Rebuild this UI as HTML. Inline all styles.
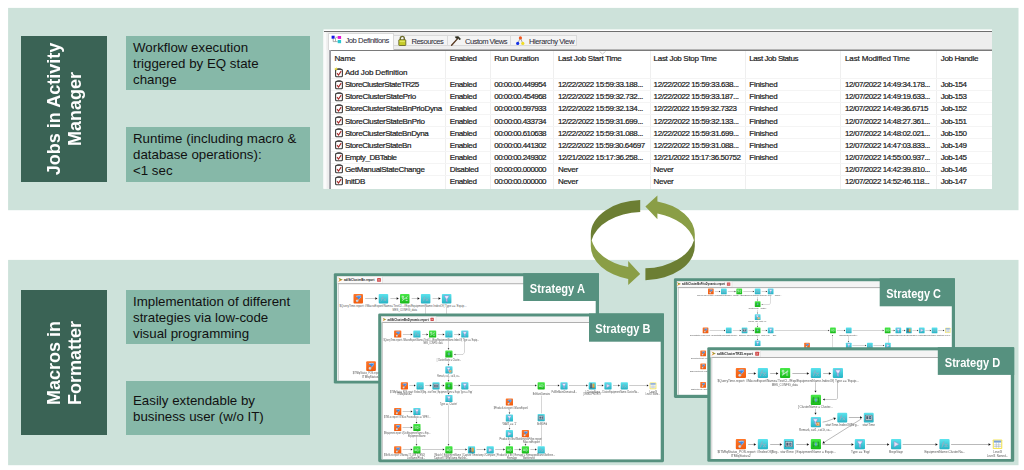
<!DOCTYPE html>
<html><head><meta charset="utf-8">
<style>
*{box-sizing:border-box;margin:0;padding:0}
html,body{width:1024px;height:470px;background:#fff;overflow:hidden;font-family:"Liberation Sans",sans-serif;}
.abs{position:absolute}
.panel{position:absolute;left:8px;width:1010.5px;background:#cde2da}
.dark{position:absolute;left:21px;width:86px;background:#3a6355}
.dark span{position:absolute;left:calc(50% + 0.7px);top:50%;transform:translate(-50%,-50%) rotate(-90deg);color:#fff;font-weight:bold;font-size:18px;line-height:21.4px;text-align:center;white-space:nowrap}
.mid{position:absolute;left:126px;width:184px;background:#86b8a8;color:#111;font-size:13.3px;line-height:16px;padding-left:7px;display:flex;align-items:center}
.t{position:absolute;white-space:nowrap;font-size:8px;line-height:10px;color:#1a1a1a;letter-spacing:-0.33px;-webkit-text-stroke:0.2px #1a1a1a}
.n{letter-spacing:-0.57px}
.d{letter-spacing:-0.41px}
.hl{position:absolute;height:1px;background:#f4f4f4;left:331px;width:661px}
.vl{position:absolute;width:1px;background:#efefef;top:51px;height:138px}
</style></head><body>
<div class="abs" style="left:0;top:0;width:1024px;height:470px;filter:blur(0.3px)">
<svg class="abs" style="left:0;top:0" width="1024" height="470"><rect x="8.1" y="7.9" width="1010.4" height="202.3" fill="#cde2da"/><rect x="8.1" y="259.9" width="1010.4" height="205.3" fill="#cde2da"/></svg>

<div class="dark" style="top:36px;height:146px"><span>Jobs in Activity<br>Manager</span></div>
<div class="dark" style="top:290px;height:145px"><span>Macros in<br>Formatter</span></div>

<div class="mid" style="top:36px;height:54px;padding-top:2.6px"><div>Workflow execution<br>triggered by EQ state<br>change</div></div>
<div class="mid" style="top:127px;height:55px;padding-top:1px"><div>Runtime (including macro &amp;<br>database operations):<br>&lt;1 sec</div></div>
<div class="mid" style="top:290px;height:54px;padding-top:1.4px"><div>Implementation of different<br>strategies via low-code<br>visual programming</div></div>
<div class="mid" style="top:381px;height:54px;padding-top:2px"><div>Easily extendable by<br>business user (w/o IT)</div></div>

<!-- table window -->
<svg class="abs" style="left:0;top:0" width="1024" height="200"><rect x="323.5" y="29.4" width="668.5" height="159.3" fill="#fff"/></svg>
<div class="abs" style="left:324px;top:31px;width:668px;height:1px;background:#6e6e6e"></div>
<div class="abs" style="left:324px;top:32px;width:668px;height:18px;background:#eeeeee"></div>
<svg class="abs" style="left:0;top:0" width="1024" height="200"><rect x="323.5" y="32" width="3" height="156.7" fill="#fbfbfb"/><rect x="326.5" y="32" width="2.5" height="156.7" fill="#eeeeee"/></svg>
<div class="abs" style="left:329px;top:49px;width:663px;height:1px;background:#b4b4b4"></div>
<div class="abs" style="left:330px;top:50px;width:662px;height:1px;background:#7a7a7a"></div>
<div class="abs" style="left:329px;top:49px;width:1px;height:140px;background:#a8a8ae"></div>
<div class="abs" style="left:330px;top:50px;width:1px;height:139px;background:#9a9aa0"></div>
<div class="abs" style="left:331px;top:51px;width:661px;height:138px;background:#fff"></div>
<div class="abs" style="left:328px;top:33px;width:66px;height:17px;background:#fff;border:1px solid #d9d9d9;border-bottom:none"></div>
<div class="abs" style="left:394px;top:34.7px;width:53.5px;height:11.6px;background:#f4f4f4;border:1px solid #dadada;border-left:none"></div>
<div class="abs" style="left:447.5px;top:34.7px;width:63.5px;height:11.6px;background:#f4f4f4;border:1px solid #dadada;border-left:none"></div>
<div class="abs" style="left:511px;top:34.7px;width:66px;height:11.6px;background:#f4f4f4;border:1px solid #dadada;border-left:none"></div>
<div class="t" style="left:345.4px;top:35.5px;letter-spacing:-0.417px;font-size:7.6px;color:#2e2e3a;-webkit-text-stroke:0.05px #2e2e3a">Job Definitions</div>
<div class="t" style="left:411.4px;top:36.5px;letter-spacing:-0.492px;font-size:7.6px;color:#2e2e3a;-webkit-text-stroke:0.05px #2e2e3a">Resources</div>
<div class="t" style="left:465.0px;top:36.5px;letter-spacing:-0.536px;font-size:7.6px;color:#2e2e3a;-webkit-text-stroke:0.05px #2e2e3a">Custom Views</div>
<div class="t" style="left:529.0px;top:36.5px;letter-spacing:-0.426px;font-size:7.6px;color:#2e2e3a;-webkit-text-stroke:0.05px #2e2e3a">Hierarchy View</div>
<svg class="abs" style="left:330px;top:34px" width="14" height="12" viewBox="0 0 14 12"><path d="M3.2 4.7 V7.6 H7.7 M5.5 3.3 H7.7 M5.5 4 V7.6" fill="none" stroke="#9a9a9a" stroke-width="0.8"/><rect x="1.6" y="1.7" width="3" height="3" fill="#1414e6"/><rect x="7.7" y="2" width="3.4" height="2.9" fill="#e614d2"/><rect x="7.7" y="6" width="3.4" height="3.2" fill="#28c8d2"/></svg>
<svg class="abs" style="left:398px;top:35px" width="9" height="12" viewBox="0 0 9 12"><path d="M2.3 5 V3.4 A2 2 0 0 1 6.3 3.4 V5" fill="none" stroke="#6e6e30" stroke-width="1.4"/><rect x="0.8" y="4.7" width="7" height="5.8" rx="0.6" fill="#c6cc2c" stroke="#5c5c1e" stroke-width="0.8"/><rect x="1.7" y="5.7" width="5.2" height="1.3" fill="#e2e660"/></svg>
<svg class="abs" style="left:450px;top:35px" width="12" height="12" viewBox="0 0 12 12"><path d="M1.6 10.3 L7.6 3.6" stroke="#5a3a22" stroke-width="1.4" stroke-linecap="round"/><path d="M5.2 1.8 L8.3 1.5 L10.6 3.9 L9.6 4.9 L8.2 3.3 L6 3.3 Z" fill="#2e2e20" stroke="#2e2e20" stroke-width="0.5"/></svg>
<svg class="abs" style="left:515px;top:35px" width="11" height="12" viewBox="0 0 11 12"><path d="M5.4 3 L2.7 8.4 M5.4 3 L7.8 8.4" stroke="#8a8a8a" stroke-width="0.7"/><circle cx="5.4" cy="2.9" r="1.6" fill="#f0561e"/><circle cx="2.7" cy="8.4" r="1.6" fill="#1432e6"/><circle cx="7.8" cy="8.4" r="1.6" fill="#f0dc28"/></svg>
<svg class="abs" style="left:599px;top:51px" width="7" height="4" viewBox="0 0 7 4"><path d="M0.5 0.5 L3.5 3 L6.5 0.5" fill="none" stroke="#bdbdbd" stroke-width="0.8"/></svg>
<div class="t" style="left:334.5px;top:54.1px;letter-spacing:-0.160px">Name</div>
<div class="t" style="left:449.7px;top:54.1px;letter-spacing:-0.366px">Enabled</div>
<div class="t" style="left:494.3px;top:54.1px;letter-spacing:-0.228px">Run Duration</div>
<div class="t" style="left:557.9px;top:54.1px;letter-spacing:-0.280px">Last Job Start Time</div>
<div class="t" style="left:653.6px;top:54.1px;letter-spacing:-0.299px">Last Job Stop Time</div>
<div class="t" style="left:749.3px;top:54.1px;letter-spacing:-0.430px">Last Job Status</div>
<div class="t" style="left:845.0px;top:54.1px;letter-spacing:-0.130px">Last Modified Time</div>
<div class="t" style="left:940.8px;top:54.1px;letter-spacing:-0.327px">Job Handle</div>
<div class="vl" style="left:445.1px"></div>
<div class="vl" style="left:489.9px"></div>
<div class="vl" style="left:553.1px"></div>
<div class="vl" style="left:649.6px"></div>
<div class="vl" style="left:744.5px"></div>
<div class="vl" style="left:840.3px"></div>
<div class="vl" style="left:936.1px"></div>
<div class="hl" style="top:78.0px"></div>
<div class="t" style="left:344.9px;top:68.2px;letter-spacing:-0.141px">Add Job Definition</div>
<svg class="abs" style="left:335.3px;top:67.7px" width="8" height="9.4" viewBox="0 0 8 9.4" overflow="visible"><rect x="0.6" y="1.4" width="6.8" height="7.4" rx="1" fill="#fff" stroke="#3a3a3a" stroke-width="1.1"/><rect x="2.3" y="0.2" width="3.4" height="1.7" fill="#555"/><path d="M2 5.2 L3.5 7 L6.2 3.1" fill="none" stroke="#a82a2a" stroke-width="1.1"/><path transform="translate(-0.9,-0.9)" d="M0.2 0.6 L1.6 1.2 L2.4 0 L2.6 1.5 L4 2 L2.6 2.4 L2.4 3.8 L1.6 2.7 L0.2 3 L1 1.9 Z" fill="#e8d838"/></svg>
<div class="hl" style="top:90.1px"></div>
<div class="t" style="left:344.9px;top:80.3px;letter-spacing:-0.419px">StoreClusterStateTR25</div>
<div class="t" style="left:449.7px;top:80.3px;letter-spacing:-0.366px">Enabled</div>
<div class="t" style="left:494.3px;top:80.3px;letter-spacing:-0.557px">00:00:00.449954</div>
<div class="t" style="left:557.9px;top:80.3px;letter-spacing:-0.412px">12/22/2022 15:59:33.188...</div>
<div class="t" style="left:653.6px;top:80.3px;letter-spacing:-0.412px">12/22/2022 15:59:33.638...</div>
<div class="t" style="left:749.3px;top:80.3px;letter-spacing:-0.280px">Finished</div>
<div class="t" style="left:845.0px;top:80.3px;letter-spacing:-0.412px">12/07/2022 14:49:34.178...</div>
<div class="t" style="left:940.8px;top:80.3px;letter-spacing:-0.458px">Job-154</div>
<svg class="abs" style="left:335.3px;top:79.8px" width="8" height="9.4" viewBox="0 0 8 9.4" overflow="visible"><rect x="0.6" y="1.4" width="6.8" height="7.4" rx="1" fill="#fff" stroke="#3a3a3a" stroke-width="1.1"/><rect x="2.3" y="0.2" width="3.4" height="1.7" fill="#555"/><path d="M2 5.2 L3.5 7 L6.2 3.1" fill="none" stroke="#a82a2a" stroke-width="1.1"/></svg>
<div class="hl" style="top:102.2px"></div>
<div class="t" style="left:344.9px;top:92.4px;letter-spacing:-0.308px">StoreClusterStatePrio</div>
<div class="t" style="left:449.7px;top:92.4px;letter-spacing:-0.366px">Enabled</div>
<div class="t" style="left:494.3px;top:92.4px;letter-spacing:-0.557px">00:00:00.454968</div>
<div class="t" style="left:557.9px;top:92.4px;letter-spacing:-0.412px">12/22/2022 15:59:32.732...</div>
<div class="t" style="left:653.6px;top:92.4px;letter-spacing:-0.412px">12/22/2022 15:59:33.187...</div>
<div class="t" style="left:749.3px;top:92.4px;letter-spacing:-0.280px">Finished</div>
<div class="t" style="left:845.0px;top:92.4px;letter-spacing:-0.412px">12/07/2022 14:49:19.633...</div>
<div class="t" style="left:940.8px;top:92.4px;letter-spacing:-0.458px">Job-153</div>
<svg class="abs" style="left:335.3px;top:91.9px" width="8" height="9.4" viewBox="0 0 8 9.4" overflow="visible"><rect x="0.6" y="1.4" width="6.8" height="7.4" rx="1" fill="#fff" stroke="#3a3a3a" stroke-width="1.1"/><rect x="2.3" y="0.2" width="3.4" height="1.7" fill="#555"/><path d="M2 5.2 L3.5 7 L6.2 3.1" fill="none" stroke="#a82a2a" stroke-width="1.1"/></svg>
<div class="hl" style="top:114.2px"></div>
<div class="t" style="left:344.9px;top:104.4px;letter-spacing:-0.331px">StoreClusterStateBnPrioDyna</div>
<div class="t" style="left:449.7px;top:104.4px;letter-spacing:-0.366px">Enabled</div>
<div class="t" style="left:494.3px;top:104.4px;letter-spacing:-0.557px">00:00:00.597933</div>
<div class="t" style="left:557.9px;top:104.4px;letter-spacing:-0.412px">12/22/2022 15:59:32.134...</div>
<div class="t" style="left:653.6px;top:104.4px;letter-spacing:-0.436px">12/22/2022 15:59:32.7323</div>
<div class="t" style="left:749.3px;top:104.4px;letter-spacing:-0.280px">Finished</div>
<div class="t" style="left:845.0px;top:104.4px;letter-spacing:-0.436px">12/07/2022 14:49:36.6715</div>
<div class="t" style="left:940.8px;top:104.4px;letter-spacing:-0.458px">Job-152</div>
<svg class="abs" style="left:335.3px;top:103.9px" width="8" height="9.4" viewBox="0 0 8 9.4" overflow="visible"><rect x="0.6" y="1.4" width="6.8" height="7.4" rx="1" fill="#fff" stroke="#3a3a3a" stroke-width="1.1"/><rect x="2.3" y="0.2" width="3.4" height="1.7" fill="#555"/><path d="M2 5.2 L3.5 7 L6.2 3.1" fill="none" stroke="#a82a2a" stroke-width="1.1"/></svg>
<div class="hl" style="top:126.3px"></div>
<div class="t" style="left:344.9px;top:116.5px;letter-spacing:-0.324px">StoreClusterStateBnPrio</div>
<div class="t" style="left:449.7px;top:116.5px;letter-spacing:-0.366px">Enabled</div>
<div class="t" style="left:494.3px;top:116.5px;letter-spacing:-0.557px">00:00:00.433734</div>
<div class="t" style="left:557.9px;top:116.5px;letter-spacing:-0.412px">12/22/2022 15:59:31.699...</div>
<div class="t" style="left:653.6px;top:116.5px;letter-spacing:-0.412px">12/22/2022 15:59:32.133...</div>
<div class="t" style="left:749.3px;top:116.5px;letter-spacing:-0.280px">Finished</div>
<div class="t" style="left:845.0px;top:116.5px;letter-spacing:-0.412px">12/07/2022 14:48:27.361...</div>
<div class="t" style="left:940.8px;top:116.5px;letter-spacing:-0.458px">Job-151</div>
<svg class="abs" style="left:335.3px;top:116.0px" width="8" height="9.4" viewBox="0 0 8 9.4" overflow="visible"><rect x="0.6" y="1.4" width="6.8" height="7.4" rx="1" fill="#fff" stroke="#3a3a3a" stroke-width="1.1"/><rect x="2.3" y="0.2" width="3.4" height="1.7" fill="#555"/><path d="M2 5.2 L3.5 7 L6.2 3.1" fill="none" stroke="#a82a2a" stroke-width="1.1"/></svg>
<div class="hl" style="top:138.4px"></div>
<div class="t" style="left:344.9px;top:128.6px;letter-spacing:-0.352px">StoreClusterStateBnDyna</div>
<div class="t" style="left:449.7px;top:128.6px;letter-spacing:-0.366px">Enabled</div>
<div class="t" style="left:494.3px;top:128.6px;letter-spacing:-0.557px">00:00:00.610638</div>
<div class="t" style="left:557.9px;top:128.6px;letter-spacing:-0.412px">12/22/2022 15:59:31.088...</div>
<div class="t" style="left:653.6px;top:128.6px;letter-spacing:-0.412px">12/22/2022 15:59:31.699...</div>
<div class="t" style="left:749.3px;top:128.6px;letter-spacing:-0.280px">Finished</div>
<div class="t" style="left:845.0px;top:128.6px;letter-spacing:-0.412px">12/07/2022 14:48:02.021...</div>
<div class="t" style="left:940.8px;top:128.6px;letter-spacing:-0.458px">Job-150</div>
<svg class="abs" style="left:335.3px;top:128.1px" width="8" height="9.4" viewBox="0 0 8 9.4" overflow="visible"><rect x="0.6" y="1.4" width="6.8" height="7.4" rx="1" fill="#fff" stroke="#3a3a3a" stroke-width="1.1"/><rect x="2.3" y="0.2" width="3.4" height="1.7" fill="#555"/><path d="M2 5.2 L3.5 7 L6.2 3.1" fill="none" stroke="#a82a2a" stroke-width="1.1"/></svg>
<div class="hl" style="top:150.5px"></div>
<div class="t" style="left:344.9px;top:140.7px;letter-spacing:-0.349px">StoreClusterStateBn</div>
<div class="t" style="left:449.7px;top:140.7px;letter-spacing:-0.366px">Enabled</div>
<div class="t" style="left:494.3px;top:140.7px;letter-spacing:-0.557px">00:00:00.441302</div>
<div class="t" style="left:557.9px;top:140.7px;letter-spacing:-0.438px">12/22/2022 15:59:30.64697</div>
<div class="t" style="left:653.6px;top:140.7px;letter-spacing:-0.412px">12/22/2022 15:59:31.088...</div>
<div class="t" style="left:749.3px;top:140.7px;letter-spacing:-0.280px">Finished</div>
<div class="t" style="left:845.0px;top:140.7px;letter-spacing:-0.412px">12/07/2022 14:47:03.833...</div>
<div class="t" style="left:940.8px;top:140.7px;letter-spacing:-0.458px">Job-149</div>
<svg class="abs" style="left:335.3px;top:140.2px" width="8" height="9.4" viewBox="0 0 8 9.4" overflow="visible"><rect x="0.6" y="1.4" width="6.8" height="7.4" rx="1" fill="#fff" stroke="#3a3a3a" stroke-width="1.1"/><rect x="2.3" y="0.2" width="3.4" height="1.7" fill="#555"/><path d="M2 5.2 L3.5 7 L6.2 3.1" fill="none" stroke="#a82a2a" stroke-width="1.1"/></svg>
<div class="hl" style="top:162.6px"></div>
<div class="t" style="left:344.9px;top:152.8px;letter-spacing:-0.435px">Empty_DBTable</div>
<div class="t" style="left:449.7px;top:152.8px;letter-spacing:-0.366px">Enabled</div>
<div class="t" style="left:494.3px;top:152.8px;letter-spacing:-0.557px">00:00:00.249302</div>
<div class="t" style="left:557.9px;top:152.8px;letter-spacing:-0.412px">12/21/2022 15:17:36.258...</div>
<div class="t" style="left:653.6px;top:152.8px;letter-spacing:-0.438px">12/21/2022 15:17:36.50752</div>
<div class="t" style="left:749.3px;top:152.8px;letter-spacing:-0.280px">Finished</div>
<div class="t" style="left:845.0px;top:152.8px;letter-spacing:-0.412px">12/07/2022 14:55:00.937...</div>
<div class="t" style="left:940.8px;top:152.8px;letter-spacing:-0.458px">Job-145</div>
<svg class="abs" style="left:335.3px;top:152.3px" width="8" height="9.4" viewBox="0 0 8 9.4" overflow="visible"><rect x="0.6" y="1.4" width="6.8" height="7.4" rx="1" fill="#fff" stroke="#3a3a3a" stroke-width="1.1"/><rect x="2.3" y="0.2" width="3.4" height="1.7" fill="#555"/><path d="M2 5.2 L3.5 7 L6.2 3.1" fill="none" stroke="#a82a2a" stroke-width="1.1"/></svg>
<div class="hl" style="top:174.6px"></div>
<div class="t" style="left:344.9px;top:164.8px;letter-spacing:-0.307px">GetManualStateChange</div>
<div class="t" style="left:449.7px;top:164.8px;letter-spacing:-0.304px">Disabled</div>
<div class="t" style="left:494.3px;top:164.8px;letter-spacing:-0.557px">00:00:00.000000</div>
<div class="t" style="left:557.9px;top:164.8px;letter-spacing:-0.288px">Never</div>
<div class="t" style="left:653.6px;top:164.8px;letter-spacing:-0.288px">Never</div>
<div class="t" style="left:845.0px;top:164.8px;letter-spacing:-0.412px">12/07/2022 14:42:39.810...</div>
<div class="t" style="left:940.8px;top:164.8px;letter-spacing:-0.458px">Job-146</div>
<svg class="abs" style="left:335.3px;top:164.3px" width="8" height="9.4" viewBox="0 0 8 9.4" overflow="visible"><rect x="0.6" y="1.4" width="6.8" height="7.4" rx="1" fill="#fff" stroke="#3a3a3a" stroke-width="1.1"/><rect x="2.3" y="0.2" width="3.4" height="1.7" fill="#555"/><path d="M2 5.2 L3.5 7 L6.2 3.1" fill="none" stroke="#a82a2a" stroke-width="1.1"/></svg>
<div class="t" style="left:344.9px;top:176.9px;letter-spacing:-0.248px">InitDB</div>
<div class="t" style="left:449.7px;top:176.9px;letter-spacing:-0.366px">Enabled</div>
<div class="t" style="left:494.3px;top:176.9px;letter-spacing:-0.557px">00:00:00.000000</div>
<div class="t" style="left:557.9px;top:176.9px;letter-spacing:-0.288px">Never</div>
<div class="t" style="left:653.6px;top:176.9px;letter-spacing:-0.288px">Never</div>
<div class="t" style="left:845.0px;top:176.9px;letter-spacing:-0.409px">12/07/2022 14:52:46.118...</div>
<div class="t" style="left:940.8px;top:176.9px;letter-spacing:-0.458px">Job-147</div>
<svg class="abs" style="left:335.3px;top:176.4px" width="8" height="9.4" viewBox="0 0 8 9.4" overflow="visible"><rect x="0.6" y="1.4" width="6.8" height="7.4" rx="1" fill="#fff" stroke="#3a3a3a" stroke-width="1.1"/><rect x="2.3" y="0.2" width="3.4" height="1.7" fill="#555"/><path d="M2 5.2 L3.5 7 L6.2 3.1" fill="none" stroke="#a82a2a" stroke-width="1.1"/></svg>
<svg class="abs" style="left:0;top:0" width="1024" height="470" viewBox="0 0 1024 470" font-family="Liberation Sans, sans-serif">
<g><path d="M640.20,200.04 A52.0,34.2 0 0 0 590.80,234.20 L590.80,240.20 L591.61,240.20 A52.0,34.2 0 0 1 640.20,212.04 Z" fill="#6c7e33"/><path d="M590.80,239.90 L590.80,246.20 A52.0,34.2 0 0 0 628.20,279.02 L628.20,285 L640.20,273.9 L628.20,261.1 L628.20,267.02 A52.0,34.2 0 0 1 591.61,239.90 Z" fill="#8a9e46"/></g><g transform="rotate(180 642.8 240.2)"><path d="M640.20,200.04 A52.0,34.2 0 0 0 590.80,234.20 L590.80,240.20 L591.61,240.20 A52.0,34.2 0 0 1 640.20,212.04 Z" fill="#6c7e33"/><path d="M590.80,239.90 L590.80,246.20 A52.0,34.2 0 0 0 628.20,279.02 L628.20,285 L640.20,273.9 L628.20,261.1 L628.20,267.02 A52.0,34.2 0 0 1 591.61,239.90 Z" fill="#8a9e46"/></g>
<defs>
<linearGradient id="gO" x1="0" y1="0" x2="0" y2="1"><stop offset="0" stop-color="#ff7628"/><stop offset="1" stop-color="#f05c0e"/></linearGradient>
<linearGradient id="gC" x1="0" y1="0" x2="0" y2="1"><stop offset="0" stop-color="#5ce4ee"/><stop offset="1" stop-color="#27b2c4"/></linearGradient>
<linearGradient id="gG" x1="0" y1="0" x2="0" y2="1"><stop offset="0" stop-color="#48ea48"/><stop offset="1" stop-color="#18b818"/></linearGradient>
<linearGradient id="gL" x1="0" y1="0" x2="0" y2="1"><stop offset="0" stop-color="#8ceef4"/><stop offset="1" stop-color="#45c4d4"/></linearGradient>
</defs>
<rect x="333.8" y="273.2" width="265.2" height="110.4" rx="1.4" fill="#56917f"/>
<rect x="337.1" y="276.5" width="258.6" height="104.2" fill="#fff"/>
<rect x="337.1" y="276.5" width="258.6" height="6.8" fill="#f4f4f4"/>
<rect x="337.1" y="276.5" width="45.2" height="6.8" fill="#fafafa" stroke="#d8d8d8" stroke-width="0.5"/>
<rect x="337.9" y="283.3" width="257.8" height="0.9" fill="#a6a6a6"/>
<rect x="337.9" y="283.3" width="0.7" height="97.4" fill="#b8b8b8"/>
<path d="M338.1,277.4 L342.7,279.7 L338.1,282.0 L339.7,279.7 Z" fill="#e8902a"/><path d="M339.5,278.5 L342.7,279.7 L339.7,279.7 Z" fill="#4aa84a"/>
<text x="343.9" y="281.0" font-size="3.6" font-weight="bold" fill="#222" textLength="30.6" lengthAdjust="spacingAndGlyphs">adiStClusterBn.report</text>
<rect x="377.1" y="278.0" width="3.8" height="3.8" rx="0.4" fill="#cf4a4a"/><path d="M378.24,279.14 L379.76,280.66 M379.76,279.14 L378.24,280.66" stroke="#f6d0d0" stroke-width="0.5"/>
<g transform="translate(353.50,293.90) scale(0.9500)"><rect x="0" y="0" width="10" height="10" rx="1" fill="url(#gO)"/><path d="M1.9 2.7 Q5 1.1 8.2 1.9 Q8.7 3.6 6.5 5.3 L5.3 5.7 Q4.8 3.8 1.9 2.7 Z" fill="#3f88e2"/><path d="M2.9 2.5 Q5.4 1.7 7.7 2.2" fill="none" stroke="#d4e6fa" stroke-width="0.7"/><path d="M7.6 3.2 Q7.2 4.4 6.1 5" fill="none" stroke="#b9cdea" stroke-width="0.6"/><path d="M5.9 5.3 Q5.6 6.3 4.8 6.6" fill="none" stroke="#b0b4c0" stroke-width="0.9"/><circle cx="3.9" cy="7.3" r="1.4" fill="#c2c6d0"/><circle cx="3.6" cy="7" r="0.6" fill="#eceef2"/></g>
<g transform="translate(378.70,293.90) scale(0.9500)"><rect x="0" y="0" width="10" height="10" rx="1" fill="url(#gC)"/><path d="M2.1 7.9 C3.5 7.9 3.3 2.3 4.9 2.3 M2.7 4.6 H4.7 M5.2 4.6 L7.9 7.6 M7.9 4.6 L5.2 7.6" fill="none" stroke="#88b2c6" stroke-width="1"/></g>
<g transform="translate(400.00,293.90) scale(0.9500)"><rect x="0" y="0" width="10" height="10" rx="1" fill="url(#gG)"/><path d="M2 3 L4 3 M2 7.2 L8 2.8 M6 7 L8 7 M2.2 5 H4 M6 5 H7.8" fill="none" stroke="#b8e8c0" stroke-width="1"/><circle cx="3" cy="3.2" r="1" fill="none" stroke="#d8f0d8" stroke-width="0.6"/></g>
<g transform="translate(420.90,293.90) scale(0.9500)"><rect x="0" y="0" width="10" height="10" rx="1" fill="url(#gC)"/><path d="M2.1 7.9 C3.5 7.9 3.3 2.3 4.9 2.3 M2.7 4.6 H4.7 M5.2 4.6 L7.9 7.6 M7.9 4.6 L5.2 7.6" fill="none" stroke="#88b2c6" stroke-width="1"/></g>
<g transform="translate(441.90,293.90) scale(0.9500)"><rect x="0" y="0" width="10" height="10" rx="1" fill="url(#gC)"/><path d="M2.1 1.9 H7.9 L5.7 5.4 V8.5 L4.3 7.8 V5.4 Z" fill="#cfc8f2" stroke="#7f8fcb" stroke-width="0.55"/><path d="M3.1 2.6 H6.9 L5.2 5 Z" fill="#f1eefc"/></g>
<path d="M365.20,298.50 L375.30,298.50" fill="none" stroke="#a2a2a2" stroke-width="0.55" stroke-linejoin="round"/><path d="M377.50,298.50 L375.30,299.71 L375.30,297.29 Z" fill="#111"/>
<path d="M390.40,298.50 L396.60,298.50" fill="none" stroke="#a2a2a2" stroke-width="0.55" stroke-linejoin="round"/><path d="M398.80,298.50 L396.60,299.71 L396.60,297.29 Z" fill="#111"/>
<path d="M411.70,298.50 L417.50,298.50" fill="none" stroke="#a2a2a2" stroke-width="0.55" stroke-linejoin="round"/><path d="M419.70,298.50 L417.50,299.71 L417.50,297.29 Z" fill="#111"/>
<path d="M432.60,298.50 L438.50,298.50" fill="none" stroke="#a2a2a2" stroke-width="0.55" stroke-linejoin="round"/><path d="M440.70,298.50 L438.50,299.71 L438.50,297.29 Z" fill="#111"/>
<text x="339.5" y="306.89" font-size="3.6" fill="#555" textLength="127.0" lengthAdjust="spacingAndGlyphs">$QueryTime.report: //MacroExport/Name=&#x27;TestCl...//Eqs/EquipmentName.IndexOf(  Type == &#x27;Equip...</text>
<text x="392.6" y="310.52" font-size="3.4" fill="#555" textLength="24.4" lengthAdjust="spacingAndGlyphs">MES_CONFIG_data</text>
<path d="M425.50,306.80 L425.50,314.00" fill="none" stroke="#b4b4b4" stroke-width="0.55" stroke-linejoin="round"/>
<path d="M446.50,306.80 L446.50,314.00" fill="none" stroke="#b4b4b4" stroke-width="0.55" stroke-linejoin="round"/>
<g transform="translate(366.20,361.30) scale(0.9700)"><rect x="0" y="0" width="10" height="10" rx="1" fill="url(#gO)"/><path d="M1.9 2.7 Q5 1.1 8.2 1.9 Q8.7 3.6 6.5 5.3 L5.3 5.7 Q4.8 3.8 1.9 2.7 Z" fill="#3f88e2"/><path d="M2.9 2.5 Q5.4 1.7 7.7 2.2" fill="none" stroke="#d4e6fa" stroke-width="0.7"/><path d="M7.6 3.2 Q7.2 4.4 6.1 5" fill="none" stroke="#b9cdea" stroke-width="0.6"/><path d="M5.9 5.3 Q5.6 6.3 4.8 6.6" fill="none" stroke="#b0b4c0" stroke-width="0.9"/><circle cx="3.9" cy="7.3" r="1.4" fill="#c2c6d0"/><circle cx="3.6" cy="7" r="0.6" fill="#eceef2"/></g>
<text x="352.8" y="374.12" font-size="3.4" fill="#555" textLength="27.2" lengthAdjust="spacingAndGlyphs">$ITMfqStatus_POS.report</text>
<text x="362.0" y="377.92" font-size="3.4" fill="#555" textLength="18.0" lengthAdjust="spacingAndGlyphs">ITMfqStatus2</text>
<rect x="523.2" y="273.2" width="75.8" height="27.8" fill="#56917f"/>
<text x="529.8" y="293.1" font-size="12.0" font-weight="bold" fill="#fff" textLength="55.2" lengthAdjust="spacingAndGlyphs">Strategy A</text>
<rect x="378.2" y="313.4" width="285.8" height="148.8" rx="1.4" fill="#56917f"/>
<rect x="381.5" y="316.7" width="279.2" height="142.7" fill="#fff"/>
<rect x="381.5" y="316.7" width="279.2" height="5.4" fill="#f4f4f4"/>
<rect x="381.5" y="316.7" width="54.5" height="5.4" fill="#fafafa" stroke="#d8d8d8" stroke-width="0.5"/>
<rect x="382.3" y="322.1" width="278.4" height="0.9" fill="#a6a6a6"/>
<rect x="382.3" y="322.1" width="0.7" height="137.3" fill="#b8b8b8"/>
<path d="M382.5,317.7 L386.2,319.5 L382.5,321.3 L383.8,319.5 Z" fill="#e8902a"/><path d="M383.6,318.6 L386.2,319.5 L383.8,319.5 Z" fill="#4aa84a"/>
<text x="387.4" y="320.7" font-size="3.3" font-weight="bold" fill="#222" textLength="41.2" lengthAdjust="spacingAndGlyphs">adiStClusterBnDynamic.report</text>
<rect x="430.5" y="317.8" width="3.3" height="3.3" rx="0.4" fill="#cf4a4a"/><path d="M431.49,318.79 L432.81,320.11 M432.81,318.79 L431.49,320.11" stroke="#f6d0d0" stroke-width="0.5"/>
<g transform="translate(394.10,330.40) scale(0.7200)"><rect x="0" y="0" width="10" height="10" rx="1" fill="url(#gO)"/><path d="M1.9 2.7 Q5 1.1 8.2 1.9 Q8.7 3.6 6.5 5.3 L5.3 5.7 Q4.8 3.8 1.9 2.7 Z" fill="#3f88e2"/><path d="M2.9 2.5 Q5.4 1.7 7.7 2.2" fill="none" stroke="#d4e6fa" stroke-width="0.7"/><path d="M7.6 3.2 Q7.2 4.4 6.1 5" fill="none" stroke="#b9cdea" stroke-width="0.6"/><path d="M5.9 5.3 Q5.6 6.3 4.8 6.6" fill="none" stroke="#b0b4c0" stroke-width="0.9"/><circle cx="3.9" cy="7.3" r="1.4" fill="#c2c6d0"/><circle cx="3.6" cy="7" r="0.6" fill="#eceef2"/></g>
<g transform="translate(413.30,330.40) scale(0.7200)"><rect x="0" y="0" width="10" height="10" rx="1" fill="url(#gC)"/><path d="M2.1 7.9 C3.5 7.9 3.3 2.3 4.9 2.3 M2.7 4.6 H4.7 M5.2 4.6 L7.9 7.6 M7.9 4.6 L5.2 7.6" fill="none" stroke="#88b2c6" stroke-width="1"/></g>
<g transform="translate(429.00,330.40) scale(0.7200)"><rect x="0" y="0" width="10" height="10" rx="1" fill="url(#gG)"/><path d="M2 3 L4 3 M2 7.2 L8 2.8 M6 7 L8 7 M2.2 5 H4 M6 5 H7.8" fill="none" stroke="#b8e8c0" stroke-width="1"/><circle cx="3" cy="3.2" r="1" fill="none" stroke="#d8f0d8" stroke-width="0.6"/></g>
<g transform="translate(445.30,330.40) scale(0.7200)"><rect x="0" y="0" width="10" height="10" rx="1" fill="url(#gC)"/><path d="M2.1 7.9 C3.5 7.9 3.3 2.3 4.9 2.3 M2.7 4.6 H4.7 M5.2 4.6 L7.9 7.6 M7.9 4.6 L5.2 7.6" fill="none" stroke="#88b2c6" stroke-width="1"/></g>
<g transform="translate(461.20,330.40) scale(0.7200)"><rect x="0" y="0" width="10" height="10" rx="1" fill="url(#gC)"/><path d="M2.1 1.9 H7.9 L5.7 5.4 V8.5 L4.3 7.8 V5.4 Z" fill="#cfc8f2" stroke="#7f8fcb" stroke-width="0.55"/><path d="M3.1 2.6 H6.9 L5.2 5 Z" fill="#f1eefc"/></g>
<path d="M402.90,334.50 L410.80,334.50" fill="none" stroke="#a2a2a2" stroke-width="0.55" stroke-linejoin="round"/><path d="M412.50,334.50 L410.80,335.44 L410.80,333.56 Z" fill="#111"/>
<path d="M422.10,334.50 L426.50,334.50" fill="none" stroke="#a2a2a2" stroke-width="0.55" stroke-linejoin="round"/><path d="M428.20,334.50 L426.50,335.44 L426.50,333.56 Z" fill="#111"/>
<path d="M437.80,334.50 L442.80,334.50" fill="none" stroke="#a2a2a2" stroke-width="0.55" stroke-linejoin="round"/><path d="M444.50,334.50 L442.80,335.44 L442.80,333.56 Z" fill="#111"/>
<path d="M454.10,334.50 L458.70,334.50" fill="none" stroke="#a2a2a2" stroke-width="0.55" stroke-linejoin="round"/><path d="M460.40,334.50 L458.70,335.44 L458.70,333.56 Z" fill="#111"/>
<text x="383.5" y="340.56" font-size="2.9" fill="#555" textLength="95.5" lengthAdjust="spacingAndGlyphs">$QueryTime.report: //MacroExport/Name=&#x27;TestCl...//Eqs/EquipmentName.IndexOf(  Type == &#x27;Equip...</text>
<text x="423.4" y="343.82" font-size="2.8" fill="#555" textLength="19.2" lengthAdjust="spacingAndGlyphs">MES_CONFIG_data</text>
<g transform="translate(445.30,350.40) scale(0.7200)"><rect x="0" y="0" width="10" height="10" rx="1" fill="url(#gG)"/><path d="M3.4 2.9 H2.3 V7.1 H3.4 M6.6 2.9 H7.7 V7.1 H6.6" fill="none" stroke="#178a2c" stroke-width="0.8"/><rect x="4.2" y="3.3" width="1.6" height="3.4" rx="0.4" fill="#4f8fe0"/><rect x="3.3" y="4.4" width="3.4" height="1.2" fill="#8fd8a0" opacity="0.6"/></g>
<path d="M448.50,338.40 L448.50,348.36" fill="none" stroke="#b4b4b4" stroke-width="0.55" stroke-linejoin="round"/><path d="M448.50,349.80 L447.71,348.36 L449.29,348.36 Z" fill="#111"/>
<path d="M464.50,338.40 L464.50,352.40 L463.00,354.50 L455.44,354.50" fill="none" stroke="#b4b4b4" stroke-width="0.55" stroke-linejoin="round"/><path d="M454.00,354.50 L455.44,353.71 L455.44,355.29 Z" fill="#111"/>
<text x="436.8" y="360.82" font-size="2.8" fill="#555" textLength="24.4" lengthAdjust="spacingAndGlyphs">[ ClusterName = Cluster...</text>
<g transform="translate(445.30,366.30) scale(0.7200)"><rect x="0" y="0" width="10" height="10" rx="1" fill="url(#gC)"/><path d="M1.9 1.8 H7.1 L5.2 4.8 V7.6 L3.9 6.9 V4.8 Z" fill="#d4cef4" stroke="#8090cc" stroke-width="0.5"/><path d="M2.8 2.4 H6.2 L4.6 4.4 Z" fill="#f1eefc"/><rect x="5.3" y="5.5" width="3.1" height="3.1" fill="#f4f0ea" stroke="#c8803a" stroke-width="0.5"/><rect x="6" y="6.2" width="1.7" height="1.7" fill="#f09030"/></g>
<path d="M448.50,358.40 L448.50,364.25" fill="none" stroke="#b4b4b4" stroke-width="0.55" stroke-linejoin="round"/><path d="M448.50,365.70 L447.71,364.25 L449.29,364.25 Z" fill="#111"/>
<text x="437.2" y="376.52" font-size="2.8" fill="#555" textLength="23.0" lengthAdjust="spacingAndGlyphs">Remark, cat1, cat1t, ca...</text>
<path d="M448.50,377.00 L448.50,380.36" fill="none" stroke="#b4b4b4" stroke-width="0.55" stroke-linejoin="round"/><path d="M448.50,381.80 L447.71,380.36 L449.29,380.36 Z" fill="#111"/>
<g transform="translate(400.80,382.20) scale(0.7200)"><rect x="0" y="0" width="10" height="10" rx="1" fill="url(#gO)"/><path d="M1.9 2.7 Q5 1.1 8.2 1.9 Q8.7 3.6 6.5 5.3 L5.3 5.7 Q4.8 3.8 1.9 2.7 Z" fill="#3f88e2"/><path d="M2.9 2.5 Q5.4 1.7 7.7 2.2" fill="none" stroke="#d4e6fa" stroke-width="0.7"/><path d="M7.6 3.2 Q7.2 4.4 6.1 5" fill="none" stroke="#b9cdea" stroke-width="0.6"/><path d="M5.9 5.3 Q5.6 6.3 4.8 6.6" fill="none" stroke="#b0b4c0" stroke-width="0.9"/><circle cx="3.9" cy="7.3" r="1.4" fill="#c2c6d0"/><circle cx="3.6" cy="7" r="0.6" fill="#eceef2"/></g>
<g transform="translate(416.50,382.20) scale(0.7200)"><rect x="0" y="0" width="10" height="10" rx="1" fill="url(#gC)"/><path d="M2.1 7.9 C3.5 7.9 3.3 2.3 4.9 2.3 M2.7 4.6 H4.7 M5.2 4.6 L7.9 7.6 M7.9 4.6 L5.2 7.6" fill="none" stroke="#88b2c6" stroke-width="1"/></g>
<g transform="translate(432.40,382.20) scale(0.7200)"><rect x="0" y="0" width="10" height="10" rx="1" fill="url(#gC)"/><rect x="1.6" y="2.5" width="6.8" height="5" fill="#d4dde4" stroke="#5a6e7e" stroke-width="0.6"/><rect x="2.5" y="3.5" width="2.1" height="3" fill="#46596b"/><rect x="5.4" y="3.5" width="2.1" height="3" fill="#46596b"/><circle cx="6.5" cy="5" r="0.6" fill="#58a0e8"/></g>
<g transform="translate(445.30,382.20) scale(0.7200)"><rect x="0" y="0" width="10" height="10" rx="1" fill="url(#gG)"/><path d="M3.4 2.9 H2.3 V7.1 H3.4 M6.6 2.9 H7.7 V7.1 H6.6" fill="none" stroke="#178a2c" stroke-width="0.8"/><rect x="4.2" y="3.3" width="1.6" height="3.4" rx="0.4" fill="#4f8fe0"/><rect x="3.3" y="4.4" width="3.4" height="1.2" fill="#8fd8a0" opacity="0.6"/></g>
<g transform="translate(461.20,382.20) scale(0.7200)"><rect x="0" y="0" width="10" height="10" rx="1" fill="url(#gC)"/><path d="M2.1 1.9 H7.9 L5.7 5.4 V8.5 L4.3 7.8 V5.4 Z" fill="#cfc8f2" stroke="#7f8fcb" stroke-width="0.55"/><path d="M3.1 2.6 H6.9 L5.2 5 Z" fill="#f1eefc"/></g>
<path d="M409.40,385.50 L414.00,385.50" fill="none" stroke="#a2a2a2" stroke-width="0.55" stroke-linejoin="round"/><path d="M415.70,385.50 L414.00,386.44 L414.00,384.56 Z" fill="#111"/>
<path d="M425.10,385.50 L429.90,385.50" fill="none" stroke="#a2a2a2" stroke-width="0.55" stroke-linejoin="round"/><path d="M431.60,385.50 L429.90,386.44 L429.90,384.56 Z" fill="#111"/>
<path d="M441.00,385.50 L442.80,385.50" fill="none" stroke="#a2a2a2" stroke-width="0.55" stroke-linejoin="round"/><path d="M444.50,385.50 L442.80,386.44 L442.80,384.56 Z" fill="#111"/>
<path d="M453.90,385.50 L458.70,385.50" fill="none" stroke="#a2a2a2" stroke-width="0.55" stroke-linejoin="round"/><path d="M460.40,385.50 L458.70,386.44 L458.70,384.56 Z" fill="#111"/>
<path d="M470.00,385.50 L535.10,385.50" fill="none" stroke="#a2a2a2" stroke-width="0.55" stroke-linejoin="round"/><path d="M536.80,385.50 L535.10,386.44 L535.10,384.56 Z" fill="#111"/>
<g transform="translate(537.60,382.20) scale(0.7200)"><rect x="0" y="0" width="10" height="10" rx="1" fill="url(#gG)"/><path d="M1.8 4.1 H4.8 L6.8 3 M1.8 5.9 H4.8 L6.8 7" fill="none" stroke="#c4f0cc" stroke-width="0.95"/><circle cx="7.4" cy="5" r="1" fill="none" stroke="#b0e8bc" stroke-width="0.7"/></g>
<g transform="translate(560.40,382.20) scale(0.7200)"><rect x="0" y="0" width="10" height="10" rx="1" fill="url(#gC)"/><path d="M2.1 1.9 H7.9 L5.7 5.4 V8.5 L4.3 7.8 V5.4 Z" fill="#cfc8f2" stroke="#7f8fcb" stroke-width="0.55"/><path d="M3.1 2.6 H6.9 L5.2 5 Z" fill="#f1eefc"/></g>
<g transform="translate(588.70,382.20) scale(0.7200)"><rect x="0" y="0" width="10" height="10" rx="1" fill="url(#gC)"/><rect x="2" y="3.4" width="2.6" height="4.6" fill="#5a6a80"/><rect x="5.2" y="2" width="2.8" height="6" fill="#e8a040"/><circle cx="3.3" cy="2.6" r="1.1" fill="#445"/><path d="M2 8 H8.2" stroke="#345" stroke-width="0.6"/></g>
<g transform="translate(604.40,382.20) scale(0.7200)"><rect x="0" y="0" width="10" height="10" rx="1" fill="url(#gC)"/><path d="M3 2.2 L8 5 L3 7.8 Z" fill="#e4e0f6" stroke="#8a96c8" stroke-width="0.6"/></g>
<g transform="translate(620.70,382.20) scale(0.7200)"><rect x="0" y="0" width="10" height="10" rx="1" fill="url(#gC)"/><path d="M2.1 7.9 C3.5 7.9 3.3 2.3 4.9 2.3 M2.7 4.6 H4.7 M5.2 4.6 L7.9 7.6 M7.9 4.6 L5.2 7.6" fill="none" stroke="#88b2c6" stroke-width="1"/></g>
<g transform="translate(649.40,382.20) scale(0.7200)"><rect x="0.3" y="0.3" width="9.4" height="9.4" rx="0.8" fill="#f4e65a"/><rect x="1.4" y="1.4" width="7.2" height="7.2" fill="#fff"/><rect x="1.4" y="1.4" width="7.2" height="2" fill="#7aa2d8"/><path d="M1.4 5.6 H8.6 M1.4 7.2 H8.6 M3.8 3.4 V8.6 M6.2 3.4 V8.6" stroke="#9ab" stroke-width="0.5" fill="none"/></g>
<path d="M546.20,385.50 L557.90,385.50" fill="none" stroke="#a2a2a2" stroke-width="0.55" stroke-linejoin="round"/><path d="M559.60,385.50 L557.90,386.44 L557.90,384.56 Z" fill="#111"/>
<path d="M569.00,385.50 L586.20,385.50" fill="none" stroke="#a2a2a2" stroke-width="0.55" stroke-linejoin="round"/><path d="M587.90,385.50 L586.20,386.44 L586.20,384.56 Z" fill="#111"/>
<path d="M597.30,385.50 L601.90,385.50" fill="none" stroke="#a2a2a2" stroke-width="0.55" stroke-linejoin="round"/><path d="M603.60,385.50 L601.90,386.44 L601.90,384.56 Z" fill="#111"/>
<path d="M613.00,385.50 L618.20,385.50" fill="none" stroke="#a2a2a2" stroke-width="0.55" stroke-linejoin="round"/><path d="M619.90,385.50 L618.20,386.44 L618.20,384.56 Z" fill="#111"/>
<path d="M629.30,385.50 L646.90,385.50" fill="none" stroke="#a2a2a2" stroke-width="0.55" stroke-linejoin="round"/><path d="M648.60,385.50 L646.90,386.44 L646.90,384.56 Z" fill="#111"/>
<text x="390.0" y="392.56" font-size="2.9" fill="#555" textLength="82.5" lengthAdjust="spacingAndGlyphs">$ITMfqStatus_POS.report: //IndexOf($trg..  startTime | EquipmentName = Equip  Type == &#x27;Eqp&#x27;</text>
<text x="397.0" y="395.02" font-size="2.8" fill="#555" textLength="15.0" lengthAdjust="spacingAndGlyphs">ITMfqStatus2</text>
<text x="532.8" y="395.12" font-size="2.8" fill="#555" textLength="17.4" lengthAdjust="spacingAndGlyphs">BnMaintDomains</text>
<text x="551.5" y="392.52" font-size="2.8" fill="#555" textLength="25.5" lengthAdjust="spacingAndGlyphs">PullBnMaintDomains.A...</text>
<text x="585.5" y="392.52" font-size="2.8" fill="#555" textLength="14.5" lengthAdjust="spacingAndGlyphs">[ ClusterName</text>
<text x="583.0" y="395.32" font-size="2.8" fill="#555" textLength="18.5" lengthAdjust="spacingAndGlyphs">[ DWELLPRIORITY</text>
<text x="602.0" y="392.52" font-size="2.8" fill="#555" textLength="37.0" lengthAdjust="spacingAndGlyphs">ClusterEquipmentName.ClusterNa...</text>
<text x="649.5" y="392.52" font-size="2.8" fill="#555" textLength="7.5" lengthAdjust="spacingAndGlyphs">Level3</text>
<text x="645.5" y="395.32" font-size="2.8" fill="#555" textLength="14.5" lengthAdjust="spacingAndGlyphs">Level3_Name...</text>
<g transform="translate(445.30,394.90) scale(0.7200)"><rect x="0" y="0" width="10" height="10" rx="1" fill="url(#gC)"/><path d="M2.1 1.9 H7.9 L5.7 5.4 V8.5 L4.3 7.8 V5.4 Z" fill="#cfc8f2" stroke="#7f8fcb" stroke-width="0.55"/><path d="M3.1 2.6 H6.9 L5.2 5 Z" fill="#f1eefc"/></g>
<path d="M448.50,389.80 L448.50,392.95" fill="none" stroke="#b4b4b4" stroke-width="0.55" stroke-linejoin="round"/><path d="M448.50,394.40 L447.71,392.95 L449.29,392.95 Z" fill="#111"/>
<text x="440.0" y="404.92" font-size="2.8" fill="#555" textLength="17.3" lengthAdjust="spacingAndGlyphs">Type == &#x27;Cluster&#x27;</text>
<path d="M448.50,405.20 L448.50,444.36" fill="none" stroke="#b4b4b4" stroke-width="0.55" stroke-linejoin="round"/><path d="M448.50,445.80 L447.71,444.36 L449.29,444.36 Z" fill="#111"/>
<g transform="translate(394.10,407.90) scale(0.7200)"><rect x="0" y="0" width="10" height="10" rx="1" fill="url(#gO)"/><path d="M1.9 2.7 Q5 1.1 8.2 1.9 Q8.7 3.6 6.5 5.3 L5.3 5.7 Q4.8 3.8 1.9 2.7 Z" fill="#3f88e2"/><path d="M2.9 2.5 Q5.4 1.7 7.7 2.2" fill="none" stroke="#d4e6fa" stroke-width="0.7"/><path d="M7.6 3.2 Q7.2 4.4 6.1 5" fill="none" stroke="#b9cdea" stroke-width="0.6"/><path d="M5.9 5.3 Q5.6 6.3 4.8 6.6" fill="none" stroke="#b0b4c0" stroke-width="0.9"/><circle cx="3.9" cy="7.3" r="1.4" fill="#c2c6d0"/><circle cx="3.6" cy="7" r="0.6" fill="#eceef2"/></g>
<g transform="translate(413.30,407.90) scale(0.7200)"><rect x="0" y="0" width="10" height="10" rx="1" fill="url(#gC)"/><path d="M2.1 1.9 H7.9 L5.7 5.4 V8.5 L4.3 7.8 V5.4 Z" fill="#cfc8f2" stroke="#7f8fcb" stroke-width="0.55"/><path d="M3.1 2.6 H6.9 L5.2 5 Z" fill="#f1eefc"/></g>
<path d="M402.60,411.50 L410.80,411.50" fill="none" stroke="#a2a2a2" stroke-width="0.55" stroke-linejoin="round"/><path d="M412.50,411.50 L410.80,412.44 L410.80,410.56 Z" fill="#111"/>
<text x="384.0" y="418.12" font-size="2.8" fill="#555" textLength="46.5" lengthAdjust="spacingAndGlyphs">$ITMLoc.report:  //ITMLoc  ProcessBasis == &#x27;WPRO...</text>
<path d="M416.50,417.80 L416.50,421.95" fill="none" stroke="#b4b4b4" stroke-width="0.55" stroke-linejoin="round"/><path d="M416.50,423.40 L415.71,421.95 L417.29,421.95 Z" fill="#111"/>
<g transform="translate(394.10,423.90) scale(0.7200)"><rect x="0" y="0" width="10" height="10" rx="1" fill="url(#gO)"/><path d="M1.9 2.7 Q5 1.1 8.2 1.9 Q8.7 3.6 6.5 5.3 L5.3 5.7 Q4.8 3.8 1.9 2.7 Z" fill="#3f88e2"/><path d="M2.9 2.5 Q5.4 1.7 7.7 2.2" fill="none" stroke="#d4e6fa" stroke-width="0.7"/><path d="M7.6 3.2 Q7.2 4.4 6.1 5" fill="none" stroke="#b9cdea" stroke-width="0.6"/><path d="M5.9 5.3 Q5.6 6.3 4.8 6.6" fill="none" stroke="#b0b4c0" stroke-width="0.9"/><circle cx="3.9" cy="7.3" r="1.4" fill="#c2c6d0"/><circle cx="3.6" cy="7" r="0.6" fill="#eceef2"/></g>
<g transform="translate(413.30,423.90) scale(0.7200)"><rect x="0" y="0" width="10" height="10" rx="1" fill="url(#gG)"/><path d="M1.8 4.1 H4.8 L6.8 3 M1.8 5.9 H4.8 L6.8 7" fill="none" stroke="#c4f0cc" stroke-width="0.95"/><circle cx="7.4" cy="5" r="1" fill="none" stroke="#b0e8bc" stroke-width="0.7"/></g>
<path d="M402.60,427.50 L410.80,427.50" fill="none" stroke="#a2a2a2" stroke-width="0.55" stroke-linejoin="round"/><path d="M412.50,427.50 L410.80,428.44 L410.80,426.56 Z" fill="#111"/>
<text x="384.0" y="434.02" font-size="2.8" fill="#555" textLength="46.5" lengthAdjust="spacingAndGlyphs">$Equipment.report: //[ListEquipmentName = Equ...</text>
<text x="408.0" y="436.62" font-size="2.8" fill="#555" textLength="17.7" lengthAdjust="spacingAndGlyphs">EquipmentName</text>
<path d="M416.50,436.60 L416.50,444.36" fill="none" stroke="#b4b4b4" stroke-width="0.55" stroke-linejoin="round"/><path d="M416.50,445.80 L415.71,444.36 L417.29,444.36 Z" fill="#111"/>
<g transform="translate(394.10,446.30) scale(0.7200)"><rect x="0" y="0" width="10" height="10" rx="1" fill="url(#gO)"/><path d="M1.9 2.7 Q5 1.1 8.2 1.9 Q8.7 3.6 6.5 5.3 L5.3 5.7 Q4.8 3.8 1.9 2.7 Z" fill="#3f88e2"/><path d="M2.9 2.5 Q5.4 1.7 7.7 2.2" fill="none" stroke="#d4e6fa" stroke-width="0.7"/><path d="M7.6 3.2 Q7.2 4.4 6.1 5" fill="none" stroke="#b9cdea" stroke-width="0.6"/><path d="M5.9 5.3 Q5.6 6.3 4.8 6.6" fill="none" stroke="#b0b4c0" stroke-width="0.9"/><circle cx="3.9" cy="7.3" r="1.4" fill="#c2c6d0"/><circle cx="3.6" cy="7" r="0.6" fill="#eceef2"/></g>
<g transform="translate(413.30,446.30) scale(0.7200)"><rect x="0" y="0" width="10" height="10" rx="1" fill="url(#gG)"/><path d="M1.8 4.1 H4.8 L6.8 3 M1.8 5.9 H4.8 L6.8 7" fill="none" stroke="#c4f0cc" stroke-width="0.95"/><circle cx="7.4" cy="5" r="1" fill="none" stroke="#b0e8bc" stroke-width="0.7"/></g>
<g transform="translate(445.30,446.30) scale(0.7200)"><rect x="0" y="0" width="10" height="10" rx="1" fill="url(#gG)"/><path d="M1.8 4.1 H4.8 L6.8 3 M1.8 5.9 H4.8 L6.8 7" fill="none" stroke="#c4f0cc" stroke-width="0.95"/><circle cx="7.4" cy="5" r="1" fill="none" stroke="#b0e8bc" stroke-width="0.7"/></g>
<g transform="translate(467.90,446.30) scale(0.7200)"><rect x="0" y="0" width="10" height="10" rx="1" fill="url(#gC)"/><rect x="2" y="3.4" width="2.6" height="4.6" fill="#5a6a80"/><rect x="5.2" y="2" width="2.8" height="6" fill="#e8a040"/><circle cx="3.3" cy="2.6" r="1.1" fill="#445"/><path d="M2 8 H8.2" stroke="#345" stroke-width="0.6"/></g>
<g transform="translate(486.60,446.30) scale(0.7200)"><rect x="0" y="0" width="10" height="10" rx="1" fill="url(#gC)"/><path d="M3 2.2 L8 5 L3 7.8 Z" fill="#e4e0f6" stroke="#8a96c8" stroke-width="0.6"/></g>
<g transform="translate(505.80,446.30) scale(0.7200)"><rect x="0" y="0" width="10" height="10" rx="1" fill="url(#gG)"/><path d="M1.8 4.1 H4.8 L6.8 3 M1.8 5.9 H4.8 L6.8 7" fill="none" stroke="#c4f0cc" stroke-width="0.95"/><circle cx="7.4" cy="5" r="1" fill="none" stroke="#b0e8bc" stroke-width="0.7"/></g>
<g transform="translate(521.80,446.30) scale(0.7200)"><rect x="0" y="0" width="10" height="10" rx="1" fill="url(#gG)"/><path d="M1.8 4.1 H4.8 L6.8 3 M1.8 5.9 H4.8 L6.8 7" fill="none" stroke="#c4f0cc" stroke-width="0.95"/><circle cx="7.4" cy="5" r="1" fill="none" stroke="#b0e8bc" stroke-width="0.7"/></g>
<g transform="translate(537.60,446.30) scale(0.7200)"><rect x="0" y="0" width="10" height="10" rx="1" fill="url(#gC)"/><path d="M2.1 7.9 C3.5 7.9 3.3 2.3 4.9 2.3 M2.7 4.6 H4.7 M5.2 4.6 L7.9 7.6 M7.9 4.6 L5.2 7.6" fill="none" stroke="#88b2c6" stroke-width="1"/></g>
<path d="M402.70,449.50 L410.80,449.50" fill="none" stroke="#a2a2a2" stroke-width="0.55" stroke-linejoin="round"/><path d="M412.50,449.50 L410.80,450.44 L410.80,448.56 Z" fill="#111"/>
<path d="M421.90,449.50 L442.80,449.50" fill="none" stroke="#a2a2a2" stroke-width="0.55" stroke-linejoin="round"/><path d="M444.50,449.50 L442.80,450.44 L442.80,448.56 Z" fill="#111"/>
<path d="M453.90,449.50 L465.40,449.50" fill="none" stroke="#a2a2a2" stroke-width="0.55" stroke-linejoin="round"/><path d="M467.10,449.50 L465.40,450.44 L465.40,448.56 Z" fill="#111"/>
<path d="M476.50,449.50 L484.10,449.50" fill="none" stroke="#a2a2a2" stroke-width="0.55" stroke-linejoin="round"/><path d="M485.80,449.50 L484.10,450.44 L484.10,448.56 Z" fill="#111"/>
<path d="M495.20,449.50 L503.30,449.50" fill="none" stroke="#a2a2a2" stroke-width="0.55" stroke-linejoin="round"/><path d="M505.00,449.50 L503.30,450.44 L503.30,448.56 Z" fill="#111"/>
<path d="M514.40,449.50 L519.30,449.50" fill="none" stroke="#a2a2a2" stroke-width="0.55" stroke-linejoin="round"/><path d="M521.00,449.50 L519.30,450.44 L519.30,448.56 Z" fill="#111"/>
<path d="M530.40,449.50 L535.10,449.50" fill="none" stroke="#a2a2a2" stroke-width="0.55" stroke-linejoin="round"/><path d="M536.80,449.50 L535.10,450.44 L535.10,448.56 Z" fill="#111"/>
<text x="384.0" y="456.42" font-size="2.8" fill="#555" textLength="41.0" lengthAdjust="spacingAndGlyphs">$ShiftList.report: //Name=&#x27;IT. LIKE 1 [ END] </text>
<text x="407.0" y="458.82" font-size="2.8" fill="#555" textLength="18.0" lengthAdjust="spacingAndGlyphs">ListName/Prod...</text>
<text x="434.0" y="456.42" font-size="2.8" fill="#555" textLength="121.0" lengthAdjust="spacingAndGlyphs">[ Match [ EquipmentName ]  Capture Timestamp   //Compare [ ProductIn = Bn [ Remapp = RemappedName.Bottlene...</text>
<text x="434.0" y="458.82" font-size="2.8" fill="#555" textLength="34.0" lengthAdjust="spacingAndGlyphs">Capture ITMfqStamp.Hashtb...</text>
<text x="507.0" y="458.82" font-size="2.8" fill="#555" textLength="10.0" lengthAdjust="spacingAndGlyphs">Remapp</text>
<text x="523.0" y="458.82" font-size="2.8" fill="#555" textLength="12.0" lengthAdjust="spacingAndGlyphs">Bottlenect</text>
<g transform="translate(505.80,398.40) scale(0.7200)"><rect x="0" y="0" width="10" height="10" rx="1" fill="url(#gO)"/><path d="M1.9 2.7 Q5 1.1 8.2 1.9 Q8.7 3.6 6.5 5.3 L5.3 5.7 Q4.8 3.8 1.9 2.7 Z" fill="#3f88e2"/><path d="M2.9 2.5 Q5.4 1.7 7.7 2.2" fill="none" stroke="#d4e6fa" stroke-width="0.7"/><path d="M7.6 3.2 Q7.2 4.4 6.1 5" fill="none" stroke="#b9cdea" stroke-width="0.6"/><path d="M5.9 5.3 Q5.6 6.3 4.8 6.6" fill="none" stroke="#b0b4c0" stroke-width="0.9"/><circle cx="3.9" cy="7.3" r="1.4" fill="#c2c6d0"/><circle cx="3.6" cy="7" r="0.6" fill="#eceef2"/></g>
<text x="493.7" y="408.62" font-size="2.8" fill="#555" textLength="34.3" lengthAdjust="spacingAndGlyphs">$ProductList.report: //MacroExport/</text>
<path d="M509.50,408.60 L509.50,412.45" fill="none" stroke="#b4b4b4" stroke-width="0.55" stroke-linejoin="round"/><path d="M509.50,413.90 L508.71,412.45 L510.29,412.45 Z" fill="#111"/>
<g transform="translate(505.80,414.40) scale(0.7200)"><rect x="0" y="0" width="10" height="10" rx="1" fill="url(#gC)"/><path d="M2.1 1.9 H7.9 L5.7 5.4 V8.5 L4.3 7.8 V5.4 Z" fill="#cfc8f2" stroke="#7f8fcb" stroke-width="0.55"/><path d="M3.1 2.6 H6.9 L5.2 5 Z" fill="#f1eefc"/></g>
<text x="502.4" y="424.52" font-size="2.8" fill="#555" textLength="14.3" lengthAdjust="spacingAndGlyphs">WAIT == &#x27;1&#x27;</text>
<path d="M509.50,424.60 L509.50,428.16" fill="none" stroke="#b4b4b4" stroke-width="0.55" stroke-linejoin="round"/><path d="M509.50,429.60 L508.71,428.16 L510.29,428.16 Z" fill="#111"/>
<g transform="translate(505.80,430.10) scale(0.7200)"><rect x="0" y="0" width="10" height="10" rx="1" fill="url(#gC)"/><path d="M3 2.2 L8 5 L3 7.8 Z" fill="#e4e0f6" stroke="#8a96c8" stroke-width="0.6"/></g>
<text x="499.5" y="440.22" font-size="2.8" fill="#555" textLength="42.5" lengthAdjust="spacingAndGlyphs">ProductIn Bn//BottleneckFilter.report</text>
<text x="523.0" y="442.72" font-size="2.8" fill="#555" textLength="17.0" lengthAdjust="spacingAndGlyphs">MacroExport</text>
<path d="M509.50,440.40 L509.50,444.36" fill="none" stroke="#b4b4b4" stroke-width="0.55" stroke-linejoin="round"/><path d="M509.50,445.80 L508.71,444.36 L510.29,444.36 Z" fill="#111"/>
<g transform="translate(521.80,430.10) scale(0.7200)"><rect x="0" y="0" width="10" height="10" rx="1" fill="url(#gO)"/><path d="M1.9 2.7 Q5 1.1 8.2 1.9 Q8.7 3.6 6.5 5.3 L5.3 5.7 Q4.8 3.8 1.9 2.7 Z" fill="#3f88e2"/><path d="M2.9 2.5 Q5.4 1.7 7.7 2.2" fill="none" stroke="#d4e6fa" stroke-width="0.7"/><path d="M7.6 3.2 Q7.2 4.4 6.1 5" fill="none" stroke="#b9cdea" stroke-width="0.6"/><path d="M5.9 5.3 Q5.6 6.3 4.8 6.6" fill="none" stroke="#b0b4c0" stroke-width="0.9"/><circle cx="3.9" cy="7.3" r="1.4" fill="#c2c6d0"/><circle cx="3.6" cy="7" r="0.6" fill="#eceef2"/></g>
<path d="M525.50,442.60 L525.50,444.36" fill="none" stroke="#b4b4b4" stroke-width="0.55" stroke-linejoin="round"/><path d="M525.50,445.80 L524.71,444.36 L526.29,444.36 Z" fill="#111"/>
<path d="M541.50,413.40 L541.50,395.60" fill="none" stroke="#b4b4b4" stroke-width="0.55" stroke-linejoin="round"/>
<g transform="translate(537.60,414.00) scale(0.7200)"><rect x="0" y="0" width="10" height="10" rx="1" fill="url(#gC)"/><rect x="1.6" y="2.5" width="6.8" height="5" fill="#d4dde4" stroke="#5a6e7e" stroke-width="0.6"/><rect x="2.5" y="3.5" width="2.1" height="3" fill="#46596b"/><rect x="5.4" y="3.5" width="2.1" height="3" fill="#46596b"/><circle cx="6.5" cy="5" r="0.6" fill="#58a0e8"/></g>
<text x="537.0" y="424.52" font-size="2.8" fill="#555" textLength="10.0" lengthAdjust="spacingAndGlyphs">BnMGFid</text>
<path d="M541.50,445.80 L541.50,424.80" fill="none" stroke="#b4b4b4" stroke-width="0.55" stroke-linejoin="round"/>
<rect x="589" y="313.4" width="75.0" height="28.3" fill="#56917f"/>
<text x="595.3" y="333.4" font-size="12.0" font-weight="bold" fill="#fff" textLength="55.1" lengthAdjust="spacingAndGlyphs">Strategy B</text>
<rect x="673.9" y="278.3" width="281.1" height="119.7" rx="1.4" fill="#56917f"/>
<rect x="677.1" y="281.5" width="274.7" height="113.3" fill="#fff"/>
<rect x="677.1" y="281.5" width="274.7" height="5.7" fill="#f4f4f4"/>
<rect x="677.1" y="281.5" width="54.9" height="5.7" fill="#fafafa" stroke="#d8d8d8" stroke-width="0.5"/>
<rect x="677.9" y="287.2" width="273.9" height="0.9" fill="#a6a6a6"/>
<rect x="677.9" y="287.2" width="0.7" height="107.6" fill="#b8b8b8"/>
<path d="M676.9,282.1 L680.8,284.0 L676.9,285.9 L678.3,284.0 Z" fill="#e8902a"/><path d="M678.1,283.0 L680.8,284.0 L678.3,284.0 Z" fill="#4aa84a"/>
<text x="682.0" y="285.1" font-size="3.1" font-weight="bold" fill="#222" textLength="42.9" lengthAdjust="spacingAndGlyphs">adiStClusterBnPrioDynamic.report</text>
<rect x="726.9" y="282.4" width="3.4" height="3.4" rx="0.4" fill="#cf4a4a"/><path d="M727.92,283.42 L729.28,284.78 M729.28,283.42 L727.92,284.78" stroke="#f6d0d0" stroke-width="0.5"/>
<g transform="translate(708.00,288.50) scale(0.5700)"><rect x="0" y="0" width="10" height="10" rx="1" fill="url(#gO)"/><path d="M1.9 2.7 Q5 1.1 8.2 1.9 Q8.7 3.6 6.5 5.3 L5.3 5.7 Q4.8 3.8 1.9 2.7 Z" fill="#3f88e2"/><path d="M2.9 2.5 Q5.4 1.7 7.7 2.2" fill="none" stroke="#d4e6fa" stroke-width="0.7"/><path d="M7.6 3.2 Q7.2 4.4 6.1 5" fill="none" stroke="#b9cdea" stroke-width="0.6"/><path d="M5.9 5.3 Q5.6 6.3 4.8 6.6" fill="none" stroke="#b0b4c0" stroke-width="0.9"/><circle cx="3.9" cy="7.3" r="1.4" fill="#c2c6d0"/><circle cx="3.6" cy="7" r="0.6" fill="#eceef2"/></g>
<g transform="translate(721.00,288.50) scale(0.5700)"><rect x="0" y="0" width="10" height="10" rx="1" fill="url(#gC)"/><path d="M2.1 7.9 C3.5 7.9 3.3 2.3 4.9 2.3 M2.7 4.6 H4.7 M5.2 4.6 L7.9 7.6 M7.9 4.6 L5.2 7.6" fill="none" stroke="#88b2c6" stroke-width="1"/></g>
<g transform="translate(736.40,288.50) scale(0.5700)"><rect x="0" y="0" width="10" height="10" rx="1" fill="url(#gG)"/><path d="M2 3 L4 3 M2 7.2 L8 2.8 M6 7 L8 7 M2.2 5 H4 M6 5 H7.8" fill="none" stroke="#b8e8c0" stroke-width="1"/><circle cx="3" cy="3.2" r="1" fill="none" stroke="#d8f0d8" stroke-width="0.6"/></g>
<g transform="translate(754.80,288.50) scale(0.5700)"><rect x="0" y="0" width="10" height="10" rx="1" fill="url(#gC)"/><path d="M2.1 7.9 C3.5 7.9 3.3 2.3 4.9 2.3 M2.7 4.6 H4.7 M5.2 4.6 L7.9 7.6 M7.9 4.6 L5.2 7.6" fill="none" stroke="#88b2c6" stroke-width="1"/></g>
<g transform="translate(767.80,288.50) scale(0.5700)"><rect x="0" y="0" width="10" height="10" rx="1" fill="url(#gC)"/><path d="M2.1 1.9 H7.9 L5.7 5.4 V8.5 L4.3 7.8 V5.4 Z" fill="#cfc8f2" stroke="#7f8fcb" stroke-width="0.55"/><path d="M3.1 2.6 H6.9 L5.2 5 Z" fill="#f1eefc"/></g>
<path d="M714.90,291.50 L719.10,291.50" fill="none" stroke="#a2a2a2" stroke-width="0.45" stroke-linejoin="round"/><path d="M720.40,291.50 L719.10,292.21 L719.10,290.79 Z" fill="#111"/>
<path d="M727.90,291.50 L734.50,291.50" fill="none" stroke="#a2a2a2" stroke-width="0.45" stroke-linejoin="round"/><path d="M735.80,291.50 L734.50,292.21 L734.50,290.79 Z" fill="#111"/>
<path d="M743.30,291.50 L752.90,291.50" fill="none" stroke="#a2a2a2" stroke-width="0.45" stroke-linejoin="round"/><path d="M754.20,291.50 L752.90,292.21 L752.90,290.79 Z" fill="#111"/>
<path d="M761.70,291.50 L765.90,291.50" fill="none" stroke="#a2a2a2" stroke-width="0.45" stroke-linejoin="round"/><path d="M767.20,291.50 L765.90,292.21 L765.90,290.79 Z" fill="#111"/>
<text x="697.3" y="296.22" font-size="2.5" fill="#4c4c4c" textLength="84.3" lengthAdjust="spacingAndGlyphs">$QueryTime.report: //MacroExport/Name=&#x27;TestCl...//Eqs/EquipmentName.IndexOf(  Type == &#x27;Equip...</text>
<g transform="translate(754.80,301.30) scale(0.5700)"><rect x="0" y="0" width="10" height="10" rx="1" fill="url(#gG)"/><path d="M3.4 2.9 H2.3 V7.1 H3.4 M6.6 2.9 H7.7 V7.1 H6.6" fill="none" stroke="#178a2c" stroke-width="0.8"/><rect x="4.2" y="3.3" width="1.6" height="3.4" rx="0.4" fill="#4f8fe0"/><rect x="3.3" y="4.4" width="3.4" height="1.2" fill="#8fd8a0" opacity="0.6"/></g>
<path d="M757.50,296.80 L757.50,299.69" fill="none" stroke="#b4b4b4" stroke-width="0.45" stroke-linejoin="round"/><path d="M757.50,300.80 L756.89,299.69 L758.11,299.69 Z" fill="#111"/>
<path d="M770.50,294.80 L770.50,303.00 L769.60,304.50 L762.50,304.50" fill="none" stroke="#b4b4b4" stroke-width="0.45" stroke-linejoin="round"/><path d="M761.40,304.50 L762.50,303.89 L762.50,305.11 Z" fill="#111"/>
<text x="748.2" y="309.12" font-size="2.5" fill="#4c4c4c" textLength="18.8" lengthAdjust="spacingAndGlyphs">[ ClusterName = Cluster...</text>
<g transform="translate(754.80,314.30) scale(0.5700)"><rect x="0" y="0" width="10" height="10" rx="1" fill="url(#gC)"/><path d="M1.9 1.8 H7.1 L5.2 4.8 V7.6 L3.9 6.9 V4.8 Z" fill="#d4cef4" stroke="#8090cc" stroke-width="0.5"/><path d="M2.8 2.4 H6.2 L4.6 4.4 Z" fill="#f1eefc"/><rect x="5.3" y="5.5" width="3.1" height="3.1" fill="#f4f0ea" stroke="#c8803a" stroke-width="0.5"/><rect x="6" y="6.2" width="1.7" height="1.7" fill="#f09030"/></g>
<path d="M757.50,309.80 L757.50,312.69" fill="none" stroke="#b4b4b4" stroke-width="0.45" stroke-linejoin="round"/><path d="M757.50,313.80 L756.89,312.69 L758.11,312.69 Z" fill="#111"/>
<text x="748.2" y="322.22" font-size="2.5" fill="#4c4c4c" textLength="18.8" lengthAdjust="spacingAndGlyphs">Remark, cat1, cat1t, ca...</text>
<path d="M757.50,323.00 L757.50,326.00" fill="none" stroke="#b4b4b4" stroke-width="0.45" stroke-linejoin="round"/><path d="M757.50,327.10 L756.89,326.00 L758.11,326.00 Z" fill="#111"/>
<g transform="translate(702.70,327.50) scale(0.5700)"><rect x="0" y="0" width="10" height="10" rx="1" fill="url(#gO)"/><path d="M1.9 2.7 Q5 1.1 8.2 1.9 Q8.7 3.6 6.5 5.3 L5.3 5.7 Q4.8 3.8 1.9 2.7 Z" fill="#3f88e2"/><path d="M2.9 2.5 Q5.4 1.7 7.7 2.2" fill="none" stroke="#d4e6fa" stroke-width="0.7"/><path d="M7.6 3.2 Q7.2 4.4 6.1 5" fill="none" stroke="#b9cdea" stroke-width="0.6"/><path d="M5.9 5.3 Q5.6 6.3 4.8 6.6" fill="none" stroke="#b0b4c0" stroke-width="0.9"/><circle cx="3.9" cy="7.3" r="1.4" fill="#c2c6d0"/><circle cx="3.6" cy="7" r="0.6" fill="#eceef2"/></g>
<g transform="translate(725.90,327.50) scale(0.5700)"><rect x="0" y="0" width="10" height="10" rx="1" fill="url(#gC)"/><path d="M2.1 7.9 C3.5 7.9 3.3 2.3 4.9 2.3 M2.7 4.6 H4.7 M5.2 4.6 L7.9 7.6 M7.9 4.6 L5.2 7.6" fill="none" stroke="#88b2c6" stroke-width="1"/></g>
<g transform="translate(741.70,327.50) scale(0.5700)"><rect x="0" y="0" width="10" height="10" rx="1" fill="url(#gC)"/><rect x="1.6" y="2.5" width="6.8" height="5" fill="#d4dde4" stroke="#5a6e7e" stroke-width="0.6"/><rect x="2.5" y="3.5" width="2.1" height="3" fill="#46596b"/><rect x="5.4" y="3.5" width="2.1" height="3" fill="#46596b"/><circle cx="6.5" cy="5" r="0.6" fill="#58a0e8"/></g>
<g transform="translate(754.80,327.50) scale(0.5700)"><rect x="0" y="0" width="10" height="10" rx="1" fill="url(#gG)"/><path d="M3.4 2.9 H2.3 V7.1 H3.4 M6.6 2.9 H7.7 V7.1 H6.6" fill="none" stroke="#178a2c" stroke-width="0.8"/><rect x="4.2" y="3.3" width="1.6" height="3.4" rx="0.4" fill="#4f8fe0"/><rect x="3.3" y="4.4" width="3.4" height="1.2" fill="#8fd8a0" opacity="0.6"/></g>
<g transform="translate(767.80,327.50) scale(0.5700)"><rect x="0" y="0" width="10" height="10" rx="1" fill="url(#gC)"/><path d="M2.1 1.9 H7.9 L5.7 5.4 V8.5 L4.3 7.8 V5.4 Z" fill="#cfc8f2" stroke="#7f8fcb" stroke-width="0.55"/><path d="M3.1 2.6 H6.9 L5.2 5 Z" fill="#f1eefc"/></g>
<path d="M709.60,330.50 L724.00,330.50" fill="none" stroke="#a2a2a2" stroke-width="0.45" stroke-linejoin="round"/><path d="M725.30,330.50 L724.00,331.21 L724.00,329.79 Z" fill="#111"/>
<path d="M732.80,330.50 L739.80,330.50" fill="none" stroke="#a2a2a2" stroke-width="0.45" stroke-linejoin="round"/><path d="M741.10,330.50 L739.80,331.21 L739.80,329.79 Z" fill="#111"/>
<path d="M748.60,330.50 L752.90,330.50" fill="none" stroke="#a2a2a2" stroke-width="0.45" stroke-linejoin="round"/><path d="M754.20,330.50 L752.90,331.21 L752.90,329.79 Z" fill="#111"/>
<path d="M761.70,330.50 L765.90,330.50" fill="none" stroke="#a2a2a2" stroke-width="0.45" stroke-linejoin="round"/><path d="M767.20,330.50 L765.90,331.21 L765.90,329.79 Z" fill="#111"/>
<path d="M774.60,330.50 L828.20,330.50" fill="none" stroke="#a2a2a2" stroke-width="0.45" stroke-linejoin="round"/><path d="M829.50,330.50 L828.20,331.21 L828.20,329.79 Z" fill="#111"/>
<g transform="translate(830.10,327.50) scale(0.5700)"><rect x="0" y="0" width="10" height="10" rx="1" fill="url(#gG)"/><path d="M1.8 4.1 H4.8 L6.8 3 M1.8 5.9 H4.8 L6.8 7" fill="none" stroke="#c4f0cc" stroke-width="0.95"/><circle cx="7.4" cy="5" r="1" fill="none" stroke="#b0e8bc" stroke-width="0.7"/></g>
<g transform="translate(845.90,327.50) scale(0.5700)"><rect x="0" y="0" width="10" height="10" rx="1" fill="url(#gC)"/><path d="M2.1 7.9 C3.5 7.9 3.3 2.3 4.9 2.3 M2.7 4.6 H4.7 M5.2 4.6 L7.9 7.6 M7.9 4.6 L5.2 7.6" fill="none" stroke="#88b2c6" stroke-width="1"/></g>
<path d="M836.90,330.50 L844.00,330.50" fill="none" stroke="#a2a2a2" stroke-width="0.45" stroke-linejoin="round"/><path d="M845.30,330.50 L844.00,331.21 L844.00,329.79 Z" fill="#111"/>
<path d="M852.60,330.50 L882.70,330.50" fill="none" stroke="#a2a2a2" stroke-width="0.45" stroke-linejoin="round"/><path d="M884.00,330.50 L882.70,331.21 L882.70,329.79 Z" fill="#111"/>
<g transform="translate(884.80,327.50) scale(0.5700)"><rect x="0" y="0" width="10" height="10" rx="1" fill="url(#gG)"/><path d="M1.8 4.1 H4.8 L6.8 3 M1.8 5.9 H4.8 L6.8 7" fill="none" stroke="#c4f0cc" stroke-width="0.95"/><circle cx="7.4" cy="5" r="1" fill="none" stroke="#b0e8bc" stroke-width="0.7"/></g>
<g transform="translate(895.50,327.50) scale(0.5700)"><rect x="0" y="0" width="10" height="10" rx="1" fill="url(#gC)"/><path d="M2.1 1.9 H7.9 L5.7 5.4 V8.5 L4.3 7.8 V5.4 Z" fill="#cfc8f2" stroke="#7f8fcb" stroke-width="0.55"/><path d="M3.1 2.6 H6.9 L5.2 5 Z" fill="#f1eefc"/></g>
<g transform="translate(906.00,327.50) scale(0.5700)"><rect x="0" y="0" width="10" height="10" rx="1" fill="url(#gC)"/><rect x="2" y="3.4" width="2.6" height="4.6" fill="#5a6a80"/><rect x="5.2" y="2" width="2.8" height="6" fill="#e8a040"/><circle cx="3.3" cy="2.6" r="1.1" fill="#445"/><path d="M2 8 H8.2" stroke="#345" stroke-width="0.6"/></g>
<g transform="translate(918.90,327.50) scale(0.5700)"><rect x="0" y="0" width="10" height="10" rx="1" fill="url(#gC)"/><path d="M3 2.2 L8 5 L3 7.8 Z" fill="#e4e0f6" stroke="#8a96c8" stroke-width="0.6"/></g>
<g transform="translate(931.70,327.50) scale(0.5700)"><rect x="0" y="0" width="10" height="10" rx="1" fill="url(#gC)"/><path d="M2.1 7.9 C3.5 7.9 3.3 2.3 4.9 2.3 M2.7 4.6 H4.7 M5.2 4.6 L7.9 7.6 M7.9 4.6 L5.2 7.6" fill="none" stroke="#88b2c6" stroke-width="1"/></g>
<g transform="translate(944.90,327.50) scale(0.5700)"><rect x="0.3" y="0.3" width="9.4" height="9.4" rx="0.8" fill="#f4e65a"/><rect x="1.4" y="1.4" width="7.2" height="7.2" fill="#fff"/><rect x="1.4" y="1.4" width="7.2" height="2" fill="#7aa2d8"/><path d="M1.4 5.6 H8.6 M1.4 7.2 H8.6 M3.8 3.4 V8.6 M6.2 3.4 V8.6" stroke="#9ab" stroke-width="0.5" fill="none"/></g>
<path d="M891.30,330.50 L893.70,330.50" fill="none" stroke="#a2a2a2" stroke-width="0.45" stroke-linejoin="round"/><path d="M895.00,330.50 L893.70,331.21 L893.70,329.79 Z" fill="#111"/>
<path d="M902.00,330.50 L904.20,330.50" fill="none" stroke="#a2a2a2" stroke-width="0.45" stroke-linejoin="round"/><path d="M905.50,330.50 L904.20,331.21 L904.20,329.79 Z" fill="#111"/>
<path d="M912.50,330.50 L917.10,330.50" fill="none" stroke="#a2a2a2" stroke-width="0.45" stroke-linejoin="round"/><path d="M918.40,330.50 L917.10,331.21 L917.10,329.79 Z" fill="#111"/>
<path d="M925.40,330.50 L929.90,330.50" fill="none" stroke="#a2a2a2" stroke-width="0.45" stroke-linejoin="round"/><path d="M931.20,330.50 L929.90,331.21 L929.90,329.79 Z" fill="#111"/>
<path d="M938.20,330.50 L943.10,330.50" fill="none" stroke="#a2a2a2" stroke-width="0.45" stroke-linejoin="round"/><path d="M944.40,330.50 L943.10,331.21 L943.10,329.79 Z" fill="#111"/>
<text x="690.0" y="335.52" font-size="2.5" fill="#4c4c4c" textLength="48.0" lengthAdjust="spacingAndGlyphs">$ITMfqStatus_POS.report: //ITMfqStatus/IndexOf($trg.tolong...</text>
<text x="739.0" y="335.52" font-size="2.5" fill="#4c4c4c" textLength="37.2" lengthAdjust="spacingAndGlyphs">startTime | EquipmentName = Equip  Type == &#x27;Eqp&#x27;</text>
<text x="839.5" y="336.02" font-size="2.5" fill="#4c4c4c" textLength="18.5" lengthAdjust="spacingAndGlyphs">BnMaintDomFilter...</text>
<text x="888.0" y="336.02" font-size="2.5" fill="#4c4c4c" textLength="63.0" lengthAdjust="spacingAndGlyphs">PullBnMaintDomains.DWELLPRIORITY  ClusterEquipmentName.ClusterNa  Level3...</text>
<g transform="translate(754.80,340.40) scale(0.5700)"><rect x="0" y="0" width="10" height="10" rx="1" fill="url(#gC)"/><path d="M2.1 1.9 H7.9 L5.7 5.4 V8.5 L4.3 7.8 V5.4 Z" fill="#cfc8f2" stroke="#7f8fcb" stroke-width="0.55"/><path d="M3.1 2.6 H6.9 L5.2 5 Z" fill="#f1eefc"/></g>
<path d="M757.50,335.80 L757.50,338.89" fill="none" stroke="#b4b4b4" stroke-width="0.45" stroke-linejoin="round"/><path d="M757.50,340.00 L756.89,338.89 L758.11,338.89 Z" fill="#111"/>
<path d="M832.50,347.50 L832.50,336.11" fill="none" stroke="#b4b4b4" stroke-width="0.45" stroke-linejoin="round"/><path d="M832.50,335.00 L833.11,336.11 L831.89,336.11 Z" fill="#111"/>
<path d="M848.50,336.00 L848.50,341.29" fill="none" stroke="#b4b4b4" stroke-width="0.45" stroke-linejoin="round"/><path d="M848.50,342.40 L847.89,341.29 L849.11,341.29 Z" fill="#111"/>
<path d="M888.50,347.50 L888.50,335.00" fill="none" stroke="#b4b4b4" stroke-width="0.45" stroke-linejoin="round"/>
<g transform="translate(804.20,342.70) scale(0.5700)"><rect x="0" y="0" width="10" height="10" rx="1" fill="url(#gO)"/><path d="M1.9 2.7 Q5 1.1 8.2 1.9 Q8.7 3.6 6.5 5.3 L5.3 5.7 Q4.8 3.8 1.9 2.7 Z" fill="#3f88e2"/><path d="M2.9 2.5 Q5.4 1.7 7.7 2.2" fill="none" stroke="#d4e6fa" stroke-width="0.7"/><path d="M7.6 3.2 Q7.2 4.4 6.1 5" fill="none" stroke="#b9cdea" stroke-width="0.6"/><path d="M5.9 5.3 Q5.6 6.3 4.8 6.6" fill="none" stroke="#b0b4c0" stroke-width="0.9"/><circle cx="3.9" cy="7.3" r="1.4" fill="#c2c6d0"/><circle cx="3.6" cy="7" r="0.6" fill="#eceef2"/></g>
<g transform="translate(845.90,342.70) scale(0.5700)"><rect x="0" y="0" width="10" height="10" rx="1" fill="url(#gC)"/><path d="M2.1 1.9 H7.9 L5.7 5.4 V8.5 L4.3 7.8 V5.4 Z" fill="#cfc8f2" stroke="#7f8fcb" stroke-width="0.55"/><path d="M3.1 2.6 H6.9 L5.2 5 Z" fill="#f1eefc"/></g>
<g transform="translate(867.00,342.70) scale(0.5700)"><rect x="0" y="0" width="10" height="10" rx="1" fill="url(#gC)"/><path d="M2.1 7.9 C3.5 7.9 3.3 2.3 4.9 2.3 M2.7 4.6 H4.7 M5.2 4.6 L7.9 7.6 M7.9 4.6 L5.2 7.6" fill="none" stroke="#88b2c6" stroke-width="1"/></g>
<g transform="translate(885.00,342.70) scale(0.5700)"><rect x="0" y="0" width="10" height="10" rx="1" fill="url(#gC)"/><path d="M3 2.2 L8 5 L3 7.8 Z" fill="#e4e0f6" stroke="#8a96c8" stroke-width="0.6"/></g>
<path d="M852.40,345.50 L865.10,345.50" fill="none" stroke="#a2a2a2" stroke-width="0.45" stroke-linejoin="round"/><path d="M866.40,345.50 L865.10,346.21 L865.10,344.79 Z" fill="#111"/>
<path d="M873.40,345.50 L883.10,345.50" fill="none" stroke="#a2a2a2" stroke-width="0.45" stroke-linejoin="round"/><path d="M884.40,345.50 L883.10,346.21 L883.10,344.79 Z" fill="#111"/>
<g transform="translate(700.30,350.50) scale(0.5700)"><rect x="0" y="0" width="10" height="10" rx="1" fill="url(#gO)"/><path d="M1.9 2.7 Q5 1.1 8.2 1.9 Q8.7 3.6 6.5 5.3 L5.3 5.7 Q4.8 3.8 1.9 2.7 Z" fill="#3f88e2"/><path d="M2.9 2.5 Q5.4 1.7 7.7 2.2" fill="none" stroke="#d4e6fa" stroke-width="0.7"/><path d="M7.6 3.2 Q7.2 4.4 6.1 5" fill="none" stroke="#b9cdea" stroke-width="0.6"/><path d="M5.9 5.3 Q5.6 6.3 4.8 6.6" fill="none" stroke="#b0b4c0" stroke-width="0.9"/><circle cx="3.9" cy="7.3" r="1.4" fill="#c2c6d0"/><circle cx="3.6" cy="7" r="0.6" fill="#eceef2"/></g>
<g transform="translate(700.30,363.50) scale(0.5700)"><rect x="0" y="0" width="10" height="10" rx="1" fill="url(#gO)"/><path d="M1.9 2.7 Q5 1.1 8.2 1.9 Q8.7 3.6 6.5 5.3 L5.3 5.7 Q4.8 3.8 1.9 2.7 Z" fill="#3f88e2"/><path d="M2.9 2.5 Q5.4 1.7 7.7 2.2" fill="none" stroke="#d4e6fa" stroke-width="0.7"/><path d="M7.6 3.2 Q7.2 4.4 6.1 5" fill="none" stroke="#b9cdea" stroke-width="0.6"/><path d="M5.9 5.3 Q5.6 6.3 4.8 6.6" fill="none" stroke="#b0b4c0" stroke-width="0.9"/><circle cx="3.9" cy="7.3" r="1.4" fill="#c2c6d0"/><circle cx="3.6" cy="7" r="0.6" fill="#eceef2"/></g>
<g transform="translate(700.30,382.00) scale(0.5700)"><rect x="0" y="0" width="10" height="10" rx="1" fill="url(#gO)"/><path d="M1.9 2.7 Q5 1.1 8.2 1.9 Q8.7 3.6 6.5 5.3 L5.3 5.7 Q4.8 3.8 1.9 2.7 Z" fill="#3f88e2"/><path d="M2.9 2.5 Q5.4 1.7 7.7 2.2" fill="none" stroke="#d4e6fa" stroke-width="0.7"/><path d="M7.6 3.2 Q7.2 4.4 6.1 5" fill="none" stroke="#b9cdea" stroke-width="0.6"/><path d="M5.9 5.3 Q5.6 6.3 4.8 6.6" fill="none" stroke="#b0b4c0" stroke-width="0.9"/><circle cx="3.9" cy="7.3" r="1.4" fill="#c2c6d0"/><circle cx="3.6" cy="7" r="0.6" fill="#eceef2"/></g>
<text x="691.0" y="358.72" font-size="2.5" fill="#4c4c4c" textLength="16.5" lengthAdjust="spacingAndGlyphs">$ProductList.report: //Ma</text>
<text x="690.0" y="372.02" font-size="2.5" fill="#4c4c4c" textLength="17.5" lengthAdjust="spacingAndGlyphs">$Equipment.report: //[List</text>
<text x="691.0" y="390.02" font-size="2.5" fill="#4c4c4c" textLength="16.5" lengthAdjust="spacingAndGlyphs">$ShiftList.report: //Nam</text>
<rect x="879.7" y="278.3" width="75.3" height="28.0" fill="#56917f"/>
<text x="886.2" y="297.9" font-size="12.0" font-weight="bold" fill="#fff" textLength="54.8" lengthAdjust="spacingAndGlyphs">Strategy C</text>
<rect x="707.3" y="347.2" width="306.9" height="114.6" rx="1.4" fill="#56917f"/>
<rect x="710.7" y="350.6" width="300.1" height="108.4" fill="#fff"/>
<rect x="710.7" y="350.6" width="300.1" height="6.4" fill="#f4f4f4"/>
<rect x="710.7" y="350.6" width="49.7" height="6.4" fill="#fafafa" stroke="#d8d8d8" stroke-width="0.5"/>
<rect x="711.5" y="357.0" width="299.3" height="0.9" fill="#a6a6a6"/>
<rect x="711.5" y="357.0" width="0.7" height="102.0" fill="#b8b8b8"/>
<path d="M711.4,351.4 L715.8,353.6 L711.4,355.8 L713.0,353.6 Z" fill="#e8902a"/><path d="M712.8,352.5 L715.8,353.6 L713.0,353.6 Z" fill="#4aa84a"/>
<text x="717.0" y="354.9" font-size="3.7" font-weight="bold" fill="#222" textLength="35.8" lengthAdjust="spacingAndGlyphs">adiStClusterTR25.report</text>
<rect x="755.2" y="351.8" width="3.9" height="3.9" rx="0.4" fill="#cf4a4a"/><path d="M756.37,352.97 L757.93,354.53 M757.93,352.97 L756.37,354.53" stroke="#f6d0d0" stroke-width="0.5"/>
<g transform="translate(735.80,367.90) scale(1.0200)"><rect x="0" y="0" width="10" height="10" rx="1" fill="url(#gO)"/><path d="M1.9 2.7 Q5 1.1 8.2 1.9 Q8.7 3.6 6.5 5.3 L5.3 5.7 Q4.8 3.8 1.9 2.7 Z" fill="#3f88e2"/><path d="M2.9 2.5 Q5.4 1.7 7.7 2.2" fill="none" stroke="#d4e6fa" stroke-width="0.7"/><path d="M7.6 3.2 Q7.2 4.4 6.1 5" fill="none" stroke="#b9cdea" stroke-width="0.6"/><path d="M5.9 5.3 Q5.6 6.3 4.8 6.6" fill="none" stroke="#b0b4c0" stroke-width="0.9"/><circle cx="3.9" cy="7.3" r="1.4" fill="#c2c6d0"/><circle cx="3.6" cy="7" r="0.6" fill="#eceef2"/></g>
<g transform="translate(757.80,367.90) scale(1.0200)"><rect x="0" y="0" width="10" height="10" rx="1" fill="url(#gC)"/><path d="M2.1 7.9 C3.5 7.9 3.3 2.3 4.9 2.3 M2.7 4.6 H4.7 M5.2 4.6 L7.9 7.6 M7.9 4.6 L5.2 7.6" fill="none" stroke="#88b2c6" stroke-width="1"/></g>
<g transform="translate(780.00,367.90) scale(1.0200)"><rect x="0" y="0" width="10" height="10" rx="1" fill="url(#gG)"/><path d="M2 3 L4 3 M2 7.2 L8 2.8 M6 7 L8 7 M2.2 5 H4 M6 5 H7.8" fill="none" stroke="#b8e8c0" stroke-width="1"/><circle cx="3" cy="3.2" r="1" fill="none" stroke="#d8f0d8" stroke-width="0.6"/></g>
<g transform="translate(810.80,367.90) scale(1.0200)"><rect x="0" y="0" width="10" height="10" rx="1" fill="url(#gC)"/><path d="M2.1 7.9 C3.5 7.9 3.3 2.3 4.9 2.3 M2.7 4.6 H4.7 M5.2 4.6 L7.9 7.6 M7.9 4.6 L5.2 7.6" fill="none" stroke="#88b2c6" stroke-width="1"/></g>
<g transform="translate(832.80,367.90) scale(1.0200)"><rect x="0" y="0" width="10" height="10" rx="1" fill="url(#gC)"/><path d="M2.1 1.9 H7.9 L5.7 5.4 V8.5 L4.3 7.8 V5.4 Z" fill="#cfc8f2" stroke="#7f8fcb" stroke-width="0.55"/><path d="M3.1 2.6 H6.9 L5.2 5 Z" fill="#f1eefc"/></g>
<path d="M748.20,373.50 L753.90,373.50" fill="none" stroke="#8a8a8a" stroke-width="0.6" stroke-linejoin="round"/><path d="M756.20,373.50 L753.90,374.76 L753.90,372.24 Z" fill="#111"/>
<path d="M770.20,373.50 L776.10,373.50" fill="none" stroke="#8a8a8a" stroke-width="0.6" stroke-linejoin="round"/><path d="M778.40,373.50 L776.10,374.76 L776.10,372.24 Z" fill="#111"/>
<path d="M792.40,373.50 L806.90,373.50" fill="none" stroke="#8a8a8a" stroke-width="0.6" stroke-linejoin="round"/><path d="M809.20,373.50 L806.90,374.76 L806.90,372.24 Z" fill="#111"/>
<path d="M823.20,373.50 L828.90,373.50" fill="none" stroke="#8a8a8a" stroke-width="0.6" stroke-linejoin="round"/><path d="M831.20,373.50 L828.90,374.76 L828.90,372.24 Z" fill="#111"/>
<text x="717.5" y="381.85" font-size="3.8" fill="#555" textLength="141.5" lengthAdjust="spacingAndGlyphs">$QueryTime.report: //MacroExport/Name=&#x27;TestCl..//Eqs/EquipmentName.IndexOf(  Type == &#x27;Equip...</text>
<text x="771.8" y="386.09" font-size="3.6" fill="#555" textLength="26.1" lengthAdjust="spacingAndGlyphs">MES_CONFIG_data</text>
<g transform="translate(810.80,394.80) scale(1.0200)"><rect x="0" y="0" width="10" height="10" rx="1" fill="url(#gG)"/><path d="M3.4 2.9 H2.3 V7.1 H3.4 M6.6 2.9 H7.7 V7.1 H6.6" fill="none" stroke="#178a2c" stroke-width="0.8"/><rect x="4.2" y="3.3" width="1.6" height="3.4" rx="0.4" fill="#4f8fe0"/><rect x="3.3" y="4.4" width="3.4" height="1.2" fill="#8fd8a0" opacity="0.6"/></g>
<path d="M815.50,382.20 L815.50,390.65" fill="none" stroke="#a4a4a4" stroke-width="0.6" stroke-linejoin="round"/><path d="M815.50,392.60 L814.42,390.65 L816.58,390.65 Z" fill="#111"/>
<path d="M837.50,382.20 L837.50,398.20 L836.40,399.50 L824.75,399.50" fill="none" stroke="#a4a4a4" stroke-width="0.6" stroke-linejoin="round"/><path d="M822.80,399.50 L824.75,398.42 L824.75,400.58 Z" fill="#111"/>
<text x="797.9" y="408.49" font-size="3.6" fill="#555" textLength="34.9" lengthAdjust="spacingAndGlyphs">[ ClusterName = Cluster...</text>
<g transform="translate(810.80,417.00) scale(1.0200)"><rect x="0" y="0" width="10" height="10" rx="1" fill="url(#gC)"/><path d="M1.9 1.8 H7.1 L5.2 4.8 V7.6 L3.9 6.9 V4.8 Z" fill="#d4cef4" stroke="#8090cc" stroke-width="0.5"/><path d="M2.8 2.4 H6.2 L4.6 4.4 Z" fill="#f1eefc"/><rect x="5.3" y="5.5" width="3.1" height="3.1" fill="#f4f0ea" stroke="#c8803a" stroke-width="0.5"/><rect x="6" y="6.2" width="1.7" height="1.7" fill="#f09030"/></g>
<path d="M815.50,408.80 L815.50,412.85" fill="none" stroke="#a4a4a4" stroke-width="0.6" stroke-linejoin="round"/><path d="M815.50,414.80 L814.42,412.85 L816.58,412.85 Z" fill="#111"/>
<text x="799.0" y="430.79" font-size="3.6" fill="#555" textLength="33.0" lengthAdjust="spacingAndGlyphs">Remark, cat1, cat1t, ca...</text>
<g transform="translate(837.30,412.70) scale(0.9900)"><rect x="0" y="0" width="10" height="10" rx="1" fill="url(#gC)"/><path d="M2.1 7.9 C3.5 7.9 3.3 2.3 4.9 2.3 M2.7 4.6 H4.7 M5.2 4.6 L7.9 7.6 M7.9 4.6 L5.2 7.6" fill="none" stroke="#88b2c6" stroke-width="1"/></g>
<g transform="translate(863.80,412.70) scale(0.9900)"><rect x="0" y="0" width="10" height="10" rx="1" fill="url(#gC)"/><rect x="1.6" y="2.5" width="6.8" height="5" fill="#d4dde4" stroke="#5a6e7e" stroke-width="0.6"/><rect x="2.5" y="3.5" width="2.1" height="3" fill="#46596b"/><rect x="5.4" y="3.5" width="2.1" height="3" fill="#46596b"/><circle cx="6.5" cy="5" r="0.6" fill="#58a0e8"/></g>
<path d="M822.60,422.10 L826.50,421.40 L833.84,418.70" fill="none" stroke="#8a8a8a" stroke-width="0.6" stroke-linejoin="round"/><path d="M836.00,417.90 L834.28,419.88 L833.40,417.51 Z" fill="#111"/>
<path d="M848.80,417.50 L860.00,417.50" fill="none" stroke="#8a8a8a" stroke-width="0.6" stroke-linejoin="round"/><path d="M862.30,417.50 L860.00,418.76 L860.00,416.24 Z" fill="#111"/>
<text x="825.4" y="426.35" font-size="3.5" fill="#555" textLength="33.6" lengthAdjust="spacingAndGlyphs">startTime.IndexOf($trg...</text>
<text x="862.4" y="426.35" font-size="3.5" fill="#555" textLength="12.6" lengthAdjust="spacingAndGlyphs">startTime</text>
<g transform="translate(735.80,439.10) scale(1.0200)"><rect x="0" y="0" width="10" height="10" rx="1" fill="url(#gO)"/><path d="M1.9 2.7 Q5 1.1 8.2 1.9 Q8.7 3.6 6.5 5.3 L5.3 5.7 Q4.8 3.8 1.9 2.7 Z" fill="#3f88e2"/><path d="M2.9 2.5 Q5.4 1.7 7.7 2.2" fill="none" stroke="#d4e6fa" stroke-width="0.7"/><path d="M7.6 3.2 Q7.2 4.4 6.1 5" fill="none" stroke="#b9cdea" stroke-width="0.6"/><path d="M5.9 5.3 Q5.6 6.3 4.8 6.6" fill="none" stroke="#b0b4c0" stroke-width="0.9"/><circle cx="3.9" cy="7.3" r="1.4" fill="#c2c6d0"/><circle cx="3.6" cy="7" r="0.6" fill="#eceef2"/></g>
<g transform="translate(757.80,439.10) scale(1.0200)"><rect x="0" y="0" width="10" height="10" rx="1" fill="url(#gC)"/><path d="M2.1 7.9 C3.5 7.9 3.3 2.3 4.9 2.3 M2.7 4.6 H4.7 M5.2 4.6 L7.9 7.6 M7.9 4.6 L5.2 7.6" fill="none" stroke="#88b2c6" stroke-width="1"/></g>
<g transform="translate(783.80,439.10) scale(1.0200)"><rect x="0" y="0" width="10" height="10" rx="1" fill="url(#gC)"/><rect x="1.6" y="2.5" width="6.8" height="5" fill="#d4dde4" stroke="#5a6e7e" stroke-width="0.6"/><rect x="2.5" y="3.5" width="2.1" height="3" fill="#46596b"/><rect x="5.4" y="3.5" width="2.1" height="3" fill="#46596b"/><circle cx="6.5" cy="5" r="0.6" fill="#58a0e8"/></g>
<g transform="translate(810.80,439.10) scale(1.0200)"><rect x="0" y="0" width="10" height="10" rx="1" fill="url(#gG)"/><path d="M3.4 2.9 H2.3 V7.1 H3.4 M6.6 2.9 H7.7 V7.1 H6.6" fill="none" stroke="#178a2c" stroke-width="0.8"/><rect x="4.2" y="3.3" width="1.6" height="3.4" rx="0.4" fill="#4f8fe0"/><rect x="3.3" y="4.4" width="3.4" height="1.2" fill="#8fd8a0" opacity="0.6"/></g>
<path d="M748.20,444.50 L753.90,444.50" fill="none" stroke="#8a8a8a" stroke-width="0.6" stroke-linejoin="round"/><path d="M756.20,444.50 L753.90,445.76 L753.90,443.24 Z" fill="#111"/>
<path d="M770.20,444.50 L779.90,444.50" fill="none" stroke="#8a8a8a" stroke-width="0.6" stroke-linejoin="round"/><path d="M782.20,444.50 L779.90,445.76 L779.90,443.24 Z" fill="#111"/>
<path d="M796.20,444.50 L806.90,444.50" fill="none" stroke="#8a8a8a" stroke-width="0.6" stroke-linejoin="round"/><path d="M809.20,444.50 L806.90,445.76 L806.90,443.24 Z" fill="#111"/>
<path d="M861.80,418.60 L824.35,442.17" fill="none" stroke="#8a8a8a" stroke-width="0.6" stroke-linejoin="round"/><path d="M822.40,443.40 L823.67,441.10 L825.02,443.25 Z" fill="#111"/>
<path d="M822.40,444.50 L851.50,444.50" fill="none" stroke="#8a8a8a" stroke-width="0.6" stroke-linejoin="round"/><path d="M853.80,444.50 L851.50,445.76 L851.50,443.24 Z" fill="#111"/>
<g transform="translate(854.80,439.10) scale(1.0200)"><rect x="0" y="0" width="10" height="10" rx="1" fill="url(#gC)"/><path d="M2.1 1.9 H7.9 L5.7 5.4 V8.5 L4.3 7.8 V5.4 Z" fill="#cfc8f2" stroke="#7f8fcb" stroke-width="0.55"/><path d="M3.1 2.6 H6.9 L5.2 5 Z" fill="#f1eefc"/></g>
<g transform="translate(891.00,439.10) scale(1.0200)"><rect x="0" y="0" width="10" height="10" rx="1" fill="url(#gC)"/><path d="M3 2.2 L8 5 L3 7.8 Z" fill="#e4e0f6" stroke="#8a96c8" stroke-width="0.6"/></g>
<g transform="translate(939.40,439.10) scale(1.0200)"><rect x="0" y="0" width="10" height="10" rx="1" fill="url(#gC)"/><path d="M2.1 7.9 C3.5 7.9 3.3 2.3 4.9 2.3 M2.7 4.6 H4.7 M5.2 4.6 L7.9 7.6 M7.9 4.6 L5.2 7.6" fill="none" stroke="#88b2c6" stroke-width="1"/></g>
<g transform="translate(992.40,439.10) scale(1.0200)"><rect x="0.3" y="0.3" width="9.4" height="9.4" rx="0.8" fill="#f4e65a"/><rect x="1.4" y="1.4" width="7.2" height="7.2" fill="#fff"/><rect x="1.4" y="1.4" width="7.2" height="2" fill="#7aa2d8"/><path d="M1.4 5.6 H8.6 M1.4 7.2 H8.6 M3.8 3.4 V8.6 M6.2 3.4 V8.6" stroke="#9ab" stroke-width="0.5" fill="none"/></g>
<path d="M866.50,444.50 L887.10,444.50" fill="none" stroke="#8a8a8a" stroke-width="0.6" stroke-linejoin="round"/><path d="M889.40,444.50 L887.10,445.76 L887.10,443.24 Z" fill="#111"/>
<path d="M902.70,444.50 L935.50,444.50" fill="none" stroke="#8a8a8a" stroke-width="0.6" stroke-linejoin="round"/><path d="M937.80,444.50 L935.50,445.76 L935.50,443.24 Z" fill="#111"/>
<path d="M951.10,444.50 L988.50,444.50" fill="none" stroke="#8a8a8a" stroke-width="0.6" stroke-linejoin="round"/><path d="M990.80,444.50 L988.50,445.76 L988.50,443.24 Z" fill="#111"/>
<text x="717.5" y="452.89" font-size="3.6" fill="#555" textLength="118.5" lengthAdjust="spacingAndGlyphs">$ITMfqStatus_POS.report: //IndexOf($trg..  startTime | EquipmentName = Equip...</text>
<text x="730.8" y="456.85" font-size="3.5" fill="#555" textLength="19.9" lengthAdjust="spacingAndGlyphs">ITMfqStatus2</text>
<text x="851.0" y="452.85" font-size="3.5" fill="#555" textLength="19.0" lengthAdjust="spacingAndGlyphs">Type == &#x27;Eqp&#x27;</text>
<text x="889.0" y="452.85" font-size="3.5" fill="#555" textLength="14.0" lengthAdjust="spacingAndGlyphs">MergeStage</text>
<text x="924.4" y="452.85" font-size="3.5" fill="#555" textLength="40.6" lengthAdjust="spacingAndGlyphs">EquipmentName.ClusterNa...</text>
<text x="993.3" y="452.85" font-size="3.5" fill="#555" textLength="8.7" lengthAdjust="spacingAndGlyphs">Level3</text>
<text x="987.0" y="456.95" font-size="3.5" fill="#555" textLength="21.0" lengthAdjust="spacingAndGlyphs">Level3_Named...</text>
<rect x="937.8" y="347.2" width="76.4" height="27.7" fill="#56917f"/>
<text x="944.8" y="367.3" font-size="12.0" font-weight="bold" fill="#fff" textLength="55.4" lengthAdjust="spacingAndGlyphs">Strategy D</text>
</svg>
</div>
</body></html>
